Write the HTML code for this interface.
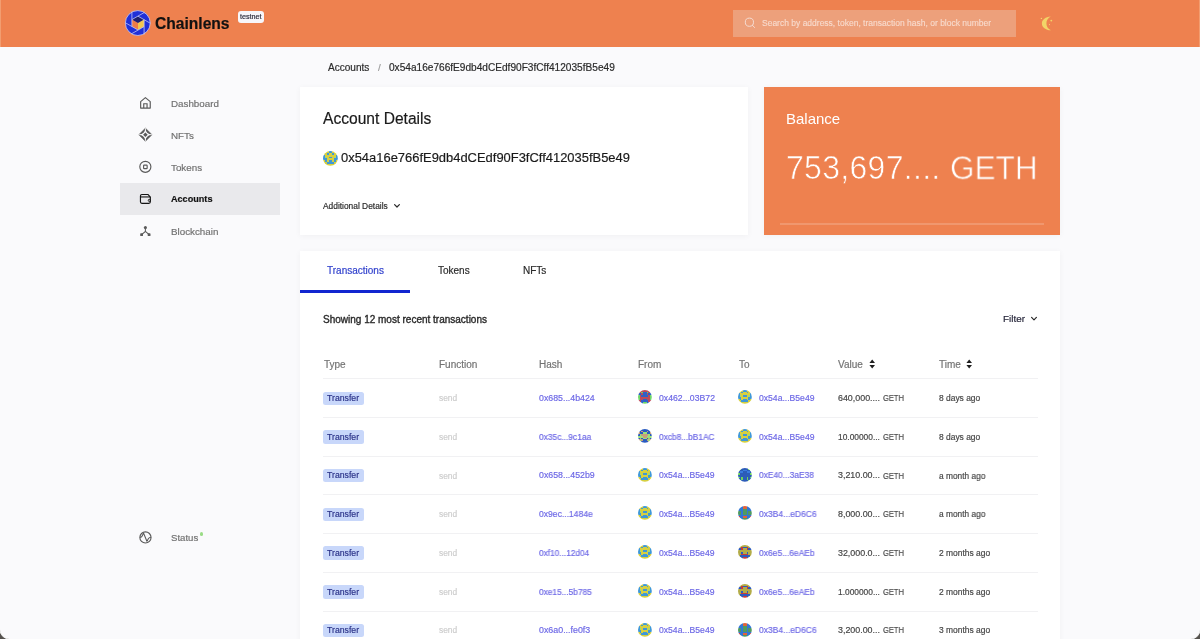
<!DOCTYPE html>
<html><head><meta charset="utf-8">
<style>
*{margin:0;padding:0;box-sizing:border-box}
html,body{width:1200px;height:639px;overflow:hidden;background:#FAFAFC;font-family:"Liberation Sans",sans-serif}
.t{position:absolute;white-space:nowrap;will-change:transform;-webkit-text-stroke:0.18px currentColor}
.abs{position:absolute}
.av{position:absolute}
svg{position:absolute;overflow:visible}
</style></head><body>
<div class="abs" style="left:0;top:0;width:1200px;height:47px;background:#EE814F"></div>
<svg style="left:124px;top:9px;width:28px;height:28px" viewBox="124 9 28 28">
<circle cx="137.8" cy="23.05" r="12.45" fill="#2030D8" stroke="#D8DCF8" stroke-width="0.7"/>
<polygon points="138,16.2 144.1,19.6 138,23 131.9,19.6" fill="#1D1F6E"/>
<polygon points="131.9,19.6 138,23 138,30 131.9,26.6" fill="#EE7C45"/>
<polygon points="138,23 144.1,19.6 144.1,26.6 138,30" fill="#F2C64E"/>
<g stroke="#C9CEF6" stroke-width="0.75" fill="none">
<line x1="131.9" y1="26.6" x2="131.9" y2="11.6"/>
<line x1="131.9" y1="19.6" x2="144.6" y2="12.3"/>
<line x1="138" y1="16.2" x2="150.2" y2="23.2"/>
<line x1="144.1" y1="19.6" x2="144.1" y2="34.5"/>
<line x1="144.1" y1="26.6" x2="131.4" y2="33.9"/>
<line x1="138" y1="30" x2="125.6" y2="22.9"/>
</g></svg>
<div class="t" style="left:154.75px;top:15.69px;font-size:15.6px;line-height:15.6px;color:#111;font-weight:700;">Chainlens</div>
<div class="abs" style="left:238px;top:10.6px;width:26px;height:12px;background:#F7F6FA;border-radius:3px"></div>
<div class="t" style="left:240.40px;top:12.80px;font-size:7.2px;line-height:7.2px;color:#2A2A3A;font-weight:400;">testnet</div>
<div class="abs" style="left:733px;top:10px;width:283px;height:26.5px;background:#EDA07B"></div>
<svg style="left:744px;top:17px;width:12px;height:12px" viewBox="0 0 12 12">
<circle cx="5.4" cy="5.2" r="4.1" fill="none" stroke="#F5DCD2" stroke-width="1"/>
<line x1="8.3" y1="8.2" x2="10.6" y2="10.5" stroke="#F5DCD2" stroke-width="1" stroke-linecap="round"/></svg>
<div class="t" style="left:761.80px;top:18.55px;font-size:8.5px;line-height:8.5px;color:#F7DBCE;font-weight:400;-webkit-text-stroke:0.1px #F7DBCE;">Search by address, token, transaction hash, or block number</div>
<svg style="left:1038px;top:14px;width:18px;height:18px" viewBox="1038 14 18 18">
<path d="M1050.8,16.5 C1045.6,16.8 1041.9,19.7 1041.9,23.4 C1041.9,27.2 1045.6,30.1 1050.9,30.2 C1047.9,28.7 1046.4,26.2 1046.4,23.4 C1046.4,20.6 1047.9,18.1 1050.8,16.5 Z" fill="#F2D468"/>
<circle cx="1041.4" cy="18.4" r="0.7" fill="#F2D468"/>
<circle cx="1051.3" cy="20.6" r="0.95" fill="#F2D468"/>
<circle cx="1049.5" cy="24.6" r="0.6" fill="#F2D468"/>
</svg>
<div class="abs" style="left:120px;top:183px;width:160px;height:32px;background:#E9E9EC"></div>
<svg style="left:136px;top:94px;width:20px;height:18px" viewBox="136 94 20 18"><path d="M140.65,108.05 V101.6 L145.4,97.65 L150.25,101.6 V108.05 Z" fill="none" stroke="#5A5A5A" stroke-width="1.15" stroke-linejoin="round"/>
<path d="M143.75,108.05 V103.75 H147.05 V108.05" fill="none" stroke="#5A5A5A" stroke-width="1.15"/></svg>
<svg style="left:136px;top:126px;width:20px;height:18px" viewBox="136 126 20 18"><path d="M145.4,128 L152.1,134.7 L145.4,141.4 L138.7,134.7 Z" fill="#5A5A5A" stroke="#5A5A5A" stroke-width="0.4" stroke-linejoin="round"/>
<path d="M145.4,128.3 Q145.95,134.15 151.8,134.7 Q145.95,135.25 145.4,141.1 Q144.85,135.25 139,134.7 Q144.85,134.15 145.4,128.3 Z" fill="#FAFAFC"/><path d="M145.4,127.8 V141.6 M138.5,134.7 H152.3" stroke="#FAFAFC" stroke-width="0.7"/>
<path d="M145.4,132.4 L147.7,134.7 L145.4,137 L143.1,134.7 Z" fill="#5A5A5A"/></svg>
<svg style="left:136px;top:158px;width:20px;height:18px" viewBox="136 158 20 18"><circle cx="145.35" cy="166.85" r="5.55" fill="none" stroke="#5A5A5A" stroke-width="1.15"/>
<rect x="143.6" y="165.1" width="3.55" height="3.5" rx="0.6" fill="none" stroke="#5A5A5A" stroke-width="1.15"/></svg>
<svg style="left:136px;top:190px;width:20px;height:18px" viewBox="136 190 20 18"><path d="M141.9,194.45 H147.9 L150.35,197.2 V201.8 Q150.35,203.3 148.9,203.3 H141.9 Q140.45,203.3 140.45,201.8 V195.9 Q140.45,194.45 141.9,194.45 Z" fill="none" stroke="#151515" stroke-width="1.15" stroke-linejoin="round"/>
<path d="M140.5,196.95 H150.3" stroke="#151515" stroke-width="1.1"/>
<circle cx="149.3" cy="200.4" r="1.05" fill="none" stroke="#151515" stroke-width="0.9"/></svg>
<svg style="left:136px;top:222px;width:20px;height:18px" viewBox="136 222 20 18"><path d="M145.4,227.6 V231.4 L141.6,234.7 M145.4,231.4 L149.1,234.7" fill="none" stroke="#5A5A5A" stroke-width="1.05"/>
<circle cx="145.4" cy="227.6" r="1.55" fill="#5A5A5A"/><rect x="140.2" y="233.3" width="2.8" height="2.8" rx="0.7" fill="#5A5A5A"/><rect x="147.7" y="233.3" width="2.8" height="2.8" rx="0.7" fill="#5A5A5A"/></svg>
<svg style="left:136px;top:528px;width:20px;height:20px" viewBox="136 528 20 20"><circle cx="145.45" cy="537.45" r="5.6" fill="none" stroke="#5A5A5A" stroke-width="1.1"/>
<path d="M139.9,537.3 C141.6,537.4 142.3,536.4 142.8,534.6 L143.5,533 L146.9,541.2 L148.5,538.5 C149.1,537.6 149.9,537.4 151.1,537.3" fill="none" stroke="#5A5A5A" stroke-width="1.05" stroke-linejoin="round"/></svg>
<div class="t" style="left:170.70px;top:98.90px;font-size:9.8px;line-height:9.8px;color:#717171;font-weight:400;">Dashboard</div>
<div class="t" style="left:170.70px;top:130.90px;font-size:9.8px;line-height:9.8px;color:#717171;font-weight:400;">NFTs</div>
<div class="t" style="left:170.70px;top:162.90px;font-size:9.8px;line-height:9.8px;color:#717171;font-weight:400;">Tokens</div>
<div class="t" style="left:170.90px;top:195.49px;font-size:9.1px;line-height:9.1px;color:#111;font-weight:700;">Accounts</div>
<div class="t" style="left:170.70px;top:226.90px;font-size:9.8px;line-height:9.8px;color:#717171;font-weight:400;">Blockchain</div>
<div class="t" style="left:170.90px;top:532.72px;font-size:9.6px;line-height:9.6px;color:#717171;font-weight:400;">Status</div>
<div class="abs" style="left:199.5px;top:532.4px;width:3.5px;height:3.5px;border-radius:50%;background:#9ADC86"></div>
<div class="t" style="left:328.20px;top:62.89px;font-size:10.05px;line-height:10.05px;color:#2A2A2A;font-weight:400;">Accounts</div>
<div class="t" style="left:377.60px;top:62.51px;font-size:9.9px;line-height:9.9px;color:#9A9A9A;font-weight:400;">/</div>
<div class="t" style="left:389.00px;top:62.83px;font-size:10.12px;line-height:10.12px;color:#2A2A2A;font-weight:400;">0x54a16e766fE9db4dCEdf90F3fCff412035fB5e49</div>
<div class="abs" style="left:300px;top:87px;width:448px;height:148px;background:#fff;box-shadow:0 1px 6px rgba(0,0,0,0.045)"></div>
<div class="t" style="left:323.00px;top:110.59px;font-size:15.6px;line-height:15.6px;color:#1A1A1A;font-weight:400;transform:scale(1.0,1.04);transform-origin:0 13.21px;">Account Details</div>
<svg class="av" style="left:322.80px;top:150.70px;width:14.8px;height:14.8px" viewBox="0 0 8 8"><defs><clipPath id="c330158"><circle cx="4" cy="4" r="4"/></clipPath></defs><g clip-path="url(#c330158)" shape-rendering="crispEdges"><rect x="0" y="0" width="1.02" height="1.02" fill="#D6D040"/><rect x="1" y="0" width="1.02" height="1.02" fill="#D6D040"/><rect x="2" y="0" width="1.02" height="1.02" fill="#D6D040"/><rect x="3" y="0" width="1.02" height="1.02" fill="#3F98D8"/><rect x="4" y="0" width="1.02" height="1.02" fill="#3F98D8"/><rect x="5" y="0" width="1.02" height="1.02" fill="#D6D040"/><rect x="6" y="0" width="1.02" height="1.02" fill="#D6D040"/><rect x="7" y="0" width="1.02" height="1.02" fill="#D6D040"/><rect x="0" y="1" width="1.02" height="1.02" fill="#D6D040"/><rect x="1" y="1" width="1.02" height="1.02" fill="#D6D040"/><rect x="2" y="1" width="1.02" height="1.02" fill="#3F98D8"/><rect x="3" y="1" width="1.02" height="1.02" fill="#D6D040"/><rect x="4" y="1" width="1.02" height="1.02" fill="#D6D040"/><rect x="5" y="1" width="1.02" height="1.02" fill="#3F98D8"/><rect x="6" y="1" width="1.02" height="1.02" fill="#D6D040"/><rect x="7" y="1" width="1.02" height="1.02" fill="#D6D040"/><rect x="0" y="2" width="1.02" height="1.02" fill="#3F98D8"/><rect x="1" y="2" width="1.02" height="1.02" fill="#D6D040"/><rect x="2" y="2" width="1.02" height="1.02" fill="#D6D040"/><rect x="3" y="2" width="1.02" height="1.02" fill="#D6D040"/><rect x="4" y="2" width="1.02" height="1.02" fill="#D6D040"/><rect x="5" y="2" width="1.02" height="1.02" fill="#D6D040"/><rect x="6" y="2" width="1.02" height="1.02" fill="#D6D040"/><rect x="7" y="2" width="1.02" height="1.02" fill="#3F98D8"/><rect x="0" y="3" width="1.02" height="1.02" fill="#3F98D8"/><rect x="1" y="3" width="1.02" height="1.02" fill="#A8D870"/><rect x="2" y="3" width="1.02" height="1.02" fill="#D6D040"/><rect x="3" y="3" width="1.02" height="1.02" fill="#3F98D8"/><rect x="4" y="3" width="1.02" height="1.02" fill="#3F98D8"/><rect x="5" y="3" width="1.02" height="1.02" fill="#D6D040"/><rect x="6" y="3" width="1.02" height="1.02" fill="#A8D870"/><rect x="7" y="3" width="1.02" height="1.02" fill="#3F98D8"/><rect x="0" y="4" width="1.02" height="1.02" fill="#3F98D8"/><rect x="1" y="4" width="1.02" height="1.02" fill="#3F98D8"/><rect x="2" y="4" width="1.02" height="1.02" fill="#D6D040"/><rect x="3" y="4" width="1.02" height="1.02" fill="#D6D040"/><rect x="4" y="4" width="1.02" height="1.02" fill="#D6D040"/><rect x="5" y="4" width="1.02" height="1.02" fill="#D6D040"/><rect x="6" y="4" width="1.02" height="1.02" fill="#3F98D8"/><rect x="7" y="4" width="1.02" height="1.02" fill="#3F98D8"/><rect x="0" y="5" width="1.02" height="1.02" fill="#D6D040"/><rect x="1" y="5" width="1.02" height="1.02" fill="#3F98D8"/><rect x="2" y="5" width="1.02" height="1.02" fill="#D6D040"/><rect x="3" y="5" width="1.02" height="1.02" fill="#3F98D8"/><rect x="4" y="5" width="1.02" height="1.02" fill="#3F98D8"/><rect x="5" y="5" width="1.02" height="1.02" fill="#D6D040"/><rect x="6" y="5" width="1.02" height="1.02" fill="#3F98D8"/><rect x="7" y="5" width="1.02" height="1.02" fill="#D6D040"/><rect x="0" y="6" width="1.02" height="1.02" fill="#D6D040"/><rect x="1" y="6" width="1.02" height="1.02" fill="#D6D040"/><rect x="2" y="6" width="1.02" height="1.02" fill="#3F98D8"/><rect x="3" y="6" width="1.02" height="1.02" fill="#3F98D8"/><rect x="4" y="6" width="1.02" height="1.02" fill="#3F98D8"/><rect x="5" y="6" width="1.02" height="1.02" fill="#3F98D8"/><rect x="6" y="6" width="1.02" height="1.02" fill="#D6D040"/><rect x="7" y="6" width="1.02" height="1.02" fill="#D6D040"/><rect x="0" y="7" width="1.02" height="1.02" fill="#D6D040"/><rect x="1" y="7" width="1.02" height="1.02" fill="#D6D040"/><rect x="2" y="7" width="1.02" height="1.02" fill="#D6D040"/><rect x="3" y="7" width="1.02" height="1.02" fill="#D6D040"/><rect x="4" y="7" width="1.02" height="1.02" fill="#D6D040"/><rect x="5" y="7" width="1.02" height="1.02" fill="#D6D040"/><rect x="6" y="7" width="1.02" height="1.02" fill="#D6D040"/><rect x="7" y="7" width="1.02" height="1.02" fill="#D6D040"/></g></svg>
<div class="t" style="left:340.90px;top:152.34px;font-size:12.94px;line-height:12.94px;color:#1A1A1A;font-weight:400;transform:scale(1.0,1.05);transform-origin:0 10.96px;">0x54a16e766fE9db4dCEdf90F3fCff412035fB5e49</div>
<div class="t" style="left:323.00px;top:201.70px;font-size:8.38px;line-height:8.38px;color:#2A2A2A;font-weight:400;">Additional Details</div>
<svg style="left:393px;top:202px;width:8px;height:8px" viewBox="0 0 8 8">
<path d="M1.6,2.6 L4,5 L6.4,2.6" fill="none" stroke="#2A2A2A" stroke-width="1.2" stroke-linecap="round" stroke-linejoin="round"/></svg>
<div class="abs" style="left:764px;top:87px;width:296px;height:148px;background:#EE814F;box-shadow:0 1px 6px rgba(0,0,0,0.045)"></div>
<div class="t" style="left:786.40px;top:111.00px;font-size:15px;line-height:15px;color:#FFFFFF;font-weight:400;-webkit-text-stroke:0;">Balance</div>
<div class="t" style="left:785.60px;top:152.10px;font-size:32px;line-height:32px;color:#FFFFFF;font-weight:400;transform:scale(1.0,1.06);transform-origin:0 27.10px;-webkit-text-stroke:0.6px #EE814F;letter-spacing:0.3px;">753,697....</div>
<div class="t" style="left:949.60px;top:152.10px;font-size:32px;line-height:32px;color:#FFFFFF;font-weight:400;transform:scale(0.985,1.06);transform-origin:0 27.10px;-webkit-text-stroke:0.6px #EE814F;">GETH</div>
<div class="abs" style="left:780px;top:223px;width:264px;height:1.7px;background:#F0976E"></div>
<div class="abs" style="left:300px;top:251px;width:760px;height:400px;background:#fff;box-shadow:0 1px 6px rgba(0,0,0,0.045)"></div>
<div class="t" style="left:327.00px;top:266.13px;font-size:10px;line-height:10px;color:#3040CC;font-weight:400;">Transactions</div>
<div class="t" style="left:437.80px;top:266.13px;font-size:10px;line-height:10px;color:#2A2A2A;font-weight:400;">Tokens</div>
<div class="t" style="left:523.20px;top:266.13px;font-size:10px;line-height:10px;color:#2A2A2A;font-weight:400;">NFTs</div>
<div class="abs" style="left:300px;top:289.5px;width:110px;height:3px;background:#1226D0"></div>
<div class="t" style="left:323.00px;top:314.83px;font-size:10px;line-height:10px;color:#2A2A2A;font-weight:400;-webkit-text-stroke:0.35px #2A2A2A;">Showing 12 most recent transactions</div>
<div class="t" style="left:1003.00px;top:314.41px;font-size:9.9px;line-height:9.9px;color:#26263A;font-weight:400;">Filter</div>
<svg style="left:1030px;top:315px;width:8px;height:8px" viewBox="0 0 8 8">
<path d="M1.6,2.4 L4,4.8 L6.4,2.4" fill="none" stroke="#2A2A2A" stroke-width="1.2" stroke-linecap="round" stroke-linejoin="round"/></svg>
<div class="t" style="left:323.80px;top:359.78px;font-size:10px;line-height:10px;color:#737373;font-weight:400;">Type</div>
<div class="t" style="left:438.75px;top:359.78px;font-size:10px;line-height:10px;color:#737373;font-weight:400;">Function</div>
<div class="t" style="left:538.75px;top:359.78px;font-size:10px;line-height:10px;color:#737373;font-weight:400;">Hash</div>
<div class="t" style="left:638.30px;top:359.78px;font-size:10px;line-height:10px;color:#737373;font-weight:400;">From</div>
<div class="t" style="left:738.75px;top:359.78px;font-size:10px;line-height:10px;color:#737373;font-weight:400;">To</div>
<div class="t" style="left:838.30px;top:359.78px;font-size:10px;line-height:10px;color:#737373;font-weight:400;">Value</div>
<div class="t" style="left:938.60px;top:359.78px;font-size:10px;line-height:10px;color:#737373;font-weight:400;">Time</div>
<svg style="left:868.8px;top:359px;width:7px;height:10px" viewBox="0 0 7 10">
<path d="M3.2,0.6 L6,4 H0.4 Z M3.2,9.4 L6,6 H0.4 Z" fill="#1E1E1E"/></svg>
<svg style="left:966.2px;top:359px;width:7px;height:10px" viewBox="0 0 7 10">
<path d="M3.2,0.6 L6,4 H0.4 Z M3.2,9.4 L6,6 H0.4 Z" fill="#1E1E1E"/></svg>
<div class="abs" style="left:322.5px;top:378.30px;width:715px;height:1px;background:#F1F1F3"></div>
<div class="abs" style="left:323.3px;top:391.50px;width:40.5px;height:13.4px;background:#C8D7FA;border-radius:2.5px"></div>
<div class="t" style="left:327.30px;top:394.03px;font-size:8.7px;line-height:8.7px;color:#2A3288;font-weight:400;-webkit-text-stroke:0.18px currentColor;">Transfer</div>
<div class="t" style="left:438.75px;top:394.09px;font-size:8.4px;line-height:8.4px;color:#CDCDCD;font-weight:400;-webkit-text-stroke:0.18px currentColor;">send</div>
<div class="t" style="left:538.75px;top:393.92px;font-size:8.6px;line-height:8.6px;color:#6D68E6;font-weight:400;transform:scale(1.0225,1.0);transform-origin:0 7.28px;-webkit-text-stroke:0.18px currentColor;">0x685...4b424</div>
<svg class="av" style="left:638.10px;top:390.20px;width:13.8px;height:13.8px" viewBox="0 0 8 8"><defs><clipPath id="c645397"><circle cx="4" cy="4" r="4"/></clipPath></defs><g clip-path="url(#c645397)" shape-rendering="crispEdges"><rect x="0" y="0" width="1.02" height="1.02" fill="#BF4A5A"/><rect x="1" y="0" width="1.02" height="1.02" fill="#BF4A5A"/><rect x="2" y="0" width="1.02" height="1.02" fill="#BF4A5A"/><rect x="3" y="0" width="1.02" height="1.02" fill="#BF4A5A"/><rect x="4" y="0" width="1.02" height="1.02" fill="#BF4A5A"/><rect x="5" y="0" width="1.02" height="1.02" fill="#BF4A5A"/><rect x="6" y="0" width="1.02" height="1.02" fill="#BF4A5A"/><rect x="7" y="0" width="1.02" height="1.02" fill="#BF4A5A"/><rect x="0" y="1" width="1.02" height="1.02" fill="#BF4A5A"/><rect x="1" y="1" width="1.02" height="1.02" fill="#BF4A5A"/><rect x="2" y="1" width="1.02" height="1.02" fill="#6FD86A"/><rect x="3" y="1" width="1.02" height="1.02" fill="#2F62C8"/><rect x="4" y="1" width="1.02" height="1.02" fill="#2F62C8"/><rect x="5" y="1" width="1.02" height="1.02" fill="#6FD86A"/><rect x="6" y="1" width="1.02" height="1.02" fill="#BF4A5A"/><rect x="7" y="1" width="1.02" height="1.02" fill="#BF4A5A"/><rect x="0" y="2" width="1.02" height="1.02" fill="#2F62C8"/><rect x="1" y="2" width="1.02" height="1.02" fill="#2F62C8"/><rect x="2" y="2" width="1.02" height="1.02" fill="#BF4A5A"/><rect x="3" y="2" width="1.02" height="1.02" fill="#2F62C8"/><rect x="4" y="2" width="1.02" height="1.02" fill="#2F62C8"/><rect x="5" y="2" width="1.02" height="1.02" fill="#BF4A5A"/><rect x="6" y="2" width="1.02" height="1.02" fill="#2F62C8"/><rect x="7" y="2" width="1.02" height="1.02" fill="#2F62C8"/><rect x="0" y="3" width="1.02" height="1.02" fill="#6FD86A"/><rect x="1" y="3" width="1.02" height="1.02" fill="#BF4A5A"/><rect x="2" y="3" width="1.02" height="1.02" fill="#2F62C8"/><rect x="3" y="3" width="1.02" height="1.02" fill="#2F62C8"/><rect x="4" y="3" width="1.02" height="1.02" fill="#2F62C8"/><rect x="5" y="3" width="1.02" height="1.02" fill="#2F62C8"/><rect x="6" y="3" width="1.02" height="1.02" fill="#BF4A5A"/><rect x="7" y="3" width="1.02" height="1.02" fill="#6FD86A"/><rect x="0" y="4" width="1.02" height="1.02" fill="#6FD86A"/><rect x="1" y="4" width="1.02" height="1.02" fill="#BF4A5A"/><rect x="2" y="4" width="1.02" height="1.02" fill="#BF4A5A"/><rect x="3" y="4" width="1.02" height="1.02" fill="#BF4A5A"/><rect x="4" y="4" width="1.02" height="1.02" fill="#BF4A5A"/><rect x="5" y="4" width="1.02" height="1.02" fill="#BF4A5A"/><rect x="6" y="4" width="1.02" height="1.02" fill="#BF4A5A"/><rect x="7" y="4" width="1.02" height="1.02" fill="#6FD86A"/><rect x="0" y="5" width="1.02" height="1.02" fill="#6FD86A"/><rect x="1" y="5" width="1.02" height="1.02" fill="#BF4A5A"/><rect x="2" y="5" width="1.02" height="1.02" fill="#BF4A5A"/><rect x="3" y="5" width="1.02" height="1.02" fill="#2F62C8"/><rect x="4" y="5" width="1.02" height="1.02" fill="#2F62C8"/><rect x="5" y="5" width="1.02" height="1.02" fill="#BF4A5A"/><rect x="6" y="5" width="1.02" height="1.02" fill="#BF4A5A"/><rect x="7" y="5" width="1.02" height="1.02" fill="#6FD86A"/><rect x="0" y="6" width="1.02" height="1.02" fill="#BF4A5A"/><rect x="1" y="6" width="1.02" height="1.02" fill="#BF4A5A"/><rect x="2" y="6" width="1.02" height="1.02" fill="#2F62C8"/><rect x="3" y="6" width="1.02" height="1.02" fill="#2F62C8"/><rect x="4" y="6" width="1.02" height="1.02" fill="#2F62C8"/><rect x="5" y="6" width="1.02" height="1.02" fill="#2F62C8"/><rect x="6" y="6" width="1.02" height="1.02" fill="#BF4A5A"/><rect x="7" y="6" width="1.02" height="1.02" fill="#BF4A5A"/><rect x="0" y="7" width="1.02" height="1.02" fill="#2F62C8"/><rect x="1" y="7" width="1.02" height="1.02" fill="#2F62C8"/><rect x="2" y="7" width="1.02" height="1.02" fill="#2F62C8"/><rect x="3" y="7" width="1.02" height="1.02" fill="#6FD86A"/><rect x="4" y="7" width="1.02" height="1.02" fill="#6FD86A"/><rect x="5" y="7" width="1.02" height="1.02" fill="#2F62C8"/><rect x="6" y="7" width="1.02" height="1.02" fill="#2F62C8"/><rect x="7" y="7" width="1.02" height="1.02" fill="#2F62C8"/></g></svg>
<div class="t" style="left:658.50px;top:393.92px;font-size:8.6px;line-height:8.6px;color:#6D68E6;font-weight:400;transform:scale(1.0096,1.0);transform-origin:0 7.28px;-webkit-text-stroke:0.18px currentColor;">0x462...03B72</div>
<svg class="av" style="left:738.10px;top:390.20px;width:13.8px;height:13.8px" viewBox="0 0 8 8"><defs><clipPath id="c745397"><circle cx="4" cy="4" r="4"/></clipPath></defs><g clip-path="url(#c745397)" shape-rendering="crispEdges"><rect x="0" y="0" width="1.02" height="1.02" fill="#D6D040"/><rect x="1" y="0" width="1.02" height="1.02" fill="#D6D040"/><rect x="2" y="0" width="1.02" height="1.02" fill="#D6D040"/><rect x="3" y="0" width="1.02" height="1.02" fill="#3F98D8"/><rect x="4" y="0" width="1.02" height="1.02" fill="#3F98D8"/><rect x="5" y="0" width="1.02" height="1.02" fill="#D6D040"/><rect x="6" y="0" width="1.02" height="1.02" fill="#D6D040"/><rect x="7" y="0" width="1.02" height="1.02" fill="#D6D040"/><rect x="0" y="1" width="1.02" height="1.02" fill="#D6D040"/><rect x="1" y="1" width="1.02" height="1.02" fill="#D6D040"/><rect x="2" y="1" width="1.02" height="1.02" fill="#3F98D8"/><rect x="3" y="1" width="1.02" height="1.02" fill="#D6D040"/><rect x="4" y="1" width="1.02" height="1.02" fill="#D6D040"/><rect x="5" y="1" width="1.02" height="1.02" fill="#3F98D8"/><rect x="6" y="1" width="1.02" height="1.02" fill="#D6D040"/><rect x="7" y="1" width="1.02" height="1.02" fill="#D6D040"/><rect x="0" y="2" width="1.02" height="1.02" fill="#3F98D8"/><rect x="1" y="2" width="1.02" height="1.02" fill="#D6D040"/><rect x="2" y="2" width="1.02" height="1.02" fill="#D6D040"/><rect x="3" y="2" width="1.02" height="1.02" fill="#D6D040"/><rect x="4" y="2" width="1.02" height="1.02" fill="#D6D040"/><rect x="5" y="2" width="1.02" height="1.02" fill="#D6D040"/><rect x="6" y="2" width="1.02" height="1.02" fill="#D6D040"/><rect x="7" y="2" width="1.02" height="1.02" fill="#3F98D8"/><rect x="0" y="3" width="1.02" height="1.02" fill="#3F98D8"/><rect x="1" y="3" width="1.02" height="1.02" fill="#A8D870"/><rect x="2" y="3" width="1.02" height="1.02" fill="#D6D040"/><rect x="3" y="3" width="1.02" height="1.02" fill="#3F98D8"/><rect x="4" y="3" width="1.02" height="1.02" fill="#3F98D8"/><rect x="5" y="3" width="1.02" height="1.02" fill="#D6D040"/><rect x="6" y="3" width="1.02" height="1.02" fill="#A8D870"/><rect x="7" y="3" width="1.02" height="1.02" fill="#3F98D8"/><rect x="0" y="4" width="1.02" height="1.02" fill="#3F98D8"/><rect x="1" y="4" width="1.02" height="1.02" fill="#3F98D8"/><rect x="2" y="4" width="1.02" height="1.02" fill="#D6D040"/><rect x="3" y="4" width="1.02" height="1.02" fill="#D6D040"/><rect x="4" y="4" width="1.02" height="1.02" fill="#D6D040"/><rect x="5" y="4" width="1.02" height="1.02" fill="#D6D040"/><rect x="6" y="4" width="1.02" height="1.02" fill="#3F98D8"/><rect x="7" y="4" width="1.02" height="1.02" fill="#3F98D8"/><rect x="0" y="5" width="1.02" height="1.02" fill="#D6D040"/><rect x="1" y="5" width="1.02" height="1.02" fill="#3F98D8"/><rect x="2" y="5" width="1.02" height="1.02" fill="#D6D040"/><rect x="3" y="5" width="1.02" height="1.02" fill="#3F98D8"/><rect x="4" y="5" width="1.02" height="1.02" fill="#3F98D8"/><rect x="5" y="5" width="1.02" height="1.02" fill="#D6D040"/><rect x="6" y="5" width="1.02" height="1.02" fill="#3F98D8"/><rect x="7" y="5" width="1.02" height="1.02" fill="#D6D040"/><rect x="0" y="6" width="1.02" height="1.02" fill="#D6D040"/><rect x="1" y="6" width="1.02" height="1.02" fill="#D6D040"/><rect x="2" y="6" width="1.02" height="1.02" fill="#3F98D8"/><rect x="3" y="6" width="1.02" height="1.02" fill="#3F98D8"/><rect x="4" y="6" width="1.02" height="1.02" fill="#3F98D8"/><rect x="5" y="6" width="1.02" height="1.02" fill="#3F98D8"/><rect x="6" y="6" width="1.02" height="1.02" fill="#D6D040"/><rect x="7" y="6" width="1.02" height="1.02" fill="#D6D040"/><rect x="0" y="7" width="1.02" height="1.02" fill="#D6D040"/><rect x="1" y="7" width="1.02" height="1.02" fill="#D6D040"/><rect x="2" y="7" width="1.02" height="1.02" fill="#D6D040"/><rect x="3" y="7" width="1.02" height="1.02" fill="#D6D040"/><rect x="4" y="7" width="1.02" height="1.02" fill="#D6D040"/><rect x="5" y="7" width="1.02" height="1.02" fill="#D6D040"/><rect x="6" y="7" width="1.02" height="1.02" fill="#D6D040"/><rect x="7" y="7" width="1.02" height="1.02" fill="#D6D040"/></g></svg>
<div class="t" style="left:758.50px;top:393.92px;font-size:8.6px;line-height:8.6px;color:#6D68E6;font-weight:400;transform:scale(1.0005,1.0);transform-origin:0 7.28px;-webkit-text-stroke:0.18px currentColor;">0x54a...B5e49</div>
<div class="t" style="left:838.00px;top:393.67px;font-size:8.89px;line-height:8.89px;color:#454545;font-weight:400;-webkit-text-stroke:0.18px currentColor;">640,000....</div>
<div class="t" style="left:883.40px;top:394.09px;font-size:8.4px;line-height:8.4px;color:#454545;font-weight:400;transform:scale(0.9,1.0);transform-origin:0 7.11px;-webkit-text-stroke:0.18px currentColor;">GETH</div>
<div class="t" style="left:938.50px;top:394.09px;font-size:8.4px;line-height:8.4px;color:#454545;font-weight:400;transform:scale(1.0049,1.0);transform-origin:0 7.11px;-webkit-text-stroke:0.18px currentColor;">8 days ago</div>
<div class="abs" style="left:322.5px;top:417.03px;width:715px;height:1px;background:#F1F1F3"></div>
<div class="abs" style="left:323.3px;top:430.23px;width:40.5px;height:13.4px;background:#C8D7FA;border-radius:2.5px"></div>
<div class="t" style="left:327.30px;top:432.76px;font-size:8.7px;line-height:8.7px;color:#2A3288;font-weight:400;-webkit-text-stroke:0.18px currentColor;">Transfer</div>
<div class="t" style="left:438.75px;top:432.82px;font-size:8.4px;line-height:8.4px;color:#CDCDCD;font-weight:400;-webkit-text-stroke:0.18px currentColor;">send</div>
<div class="t" style="left:538.75px;top:432.65px;font-size:8.6px;line-height:8.6px;color:#6D68E6;font-weight:400;transform:scale(0.9756,1.0);transform-origin:0 7.28px;-webkit-text-stroke:0.18px currentColor;">0x35c...9c1aa</div>
<svg class="av" style="left:638.10px;top:428.93px;width:13.8px;height:13.8px" viewBox="0 0 8 8"><defs><clipPath id="c645435"><circle cx="4" cy="4" r="4"/></clipPath></defs><g clip-path="url(#c645435)" shape-rendering="crispEdges"><rect x="0" y="0" width="1.02" height="1.02" fill="#2A5CC0"/><rect x="1" y="0" width="1.02" height="1.02" fill="#2A5CC0"/><rect x="2" y="0" width="1.02" height="1.02" fill="#2A5CC0"/><rect x="3" y="0" width="1.02" height="1.02" fill="#2A5CC0"/><rect x="4" y="0" width="1.02" height="1.02" fill="#2A5CC0"/><rect x="5" y="0" width="1.02" height="1.02" fill="#2A5CC0"/><rect x="6" y="0" width="1.02" height="1.02" fill="#2A5CC0"/><rect x="7" y="0" width="1.02" height="1.02" fill="#2A5CC0"/><rect x="0" y="1" width="1.02" height="1.02" fill="#2A5CC0"/><rect x="1" y="1" width="1.02" height="1.02" fill="#2A5CC0"/><rect x="2" y="1" width="1.02" height="1.02" fill="#C9A07A"/><rect x="3" y="1" width="1.02" height="1.02" fill="#2A5CC0"/><rect x="4" y="1" width="1.02" height="1.02" fill="#2A5CC0"/><rect x="5" y="1" width="1.02" height="1.02" fill="#C9A07A"/><rect x="6" y="1" width="1.02" height="1.02" fill="#2A5CC0"/><rect x="7" y="1" width="1.02" height="1.02" fill="#2A5CC0"/><rect x="0" y="2" width="1.02" height="1.02" fill="#C9A07A"/><rect x="1" y="2" width="1.02" height="1.02" fill="#2A5CC0"/><rect x="2" y="2" width="1.02" height="1.02" fill="#2A5CC0"/><rect x="3" y="2" width="1.02" height="1.02" fill="#9BE37A"/><rect x="4" y="2" width="1.02" height="1.02" fill="#9BE37A"/><rect x="5" y="2" width="1.02" height="1.02" fill="#2A5CC0"/><rect x="6" y="2" width="1.02" height="1.02" fill="#2A5CC0"/><rect x="7" y="2" width="1.02" height="1.02" fill="#C9A07A"/><rect x="0" y="3" width="1.02" height="1.02" fill="#2A5CC0"/><rect x="1" y="3" width="1.02" height="1.02" fill="#9BE37A"/><rect x="2" y="3" width="1.02" height="1.02" fill="#C9A07A"/><rect x="3" y="3" width="1.02" height="1.02" fill="#C9A07A"/><rect x="4" y="3" width="1.02" height="1.02" fill="#C9A07A"/><rect x="5" y="3" width="1.02" height="1.02" fill="#C9A07A"/><rect x="6" y="3" width="1.02" height="1.02" fill="#9BE37A"/><rect x="7" y="3" width="1.02" height="1.02" fill="#2A5CC0"/><rect x="0" y="4" width="1.02" height="1.02" fill="#9BE37A"/><rect x="1" y="4" width="1.02" height="1.02" fill="#9BE37A"/><rect x="2" y="4" width="1.02" height="1.02" fill="#9BE37A"/><rect x="3" y="4" width="1.02" height="1.02" fill="#C9A07A"/><rect x="4" y="4" width="1.02" height="1.02" fill="#C9A07A"/><rect x="5" y="4" width="1.02" height="1.02" fill="#9BE37A"/><rect x="6" y="4" width="1.02" height="1.02" fill="#9BE37A"/><rect x="7" y="4" width="1.02" height="1.02" fill="#9BE37A"/><rect x="0" y="5" width="1.02" height="1.02" fill="#2A5CC0"/><rect x="1" y="5" width="1.02" height="1.02" fill="#C9A07A"/><rect x="2" y="5" width="1.02" height="1.02" fill="#2A5CC0"/><rect x="3" y="5" width="1.02" height="1.02" fill="#9BE37A"/><rect x="4" y="5" width="1.02" height="1.02" fill="#9BE37A"/><rect x="5" y="5" width="1.02" height="1.02" fill="#2A5CC0"/><rect x="6" y="5" width="1.02" height="1.02" fill="#C9A07A"/><rect x="7" y="5" width="1.02" height="1.02" fill="#2A5CC0"/><rect x="0" y="6" width="1.02" height="1.02" fill="#C9A07A"/><rect x="1" y="6" width="1.02" height="1.02" fill="#9BE37A"/><rect x="2" y="6" width="1.02" height="1.02" fill="#C9A07A"/><rect x="3" y="6" width="1.02" height="1.02" fill="#2A5CC0"/><rect x="4" y="6" width="1.02" height="1.02" fill="#2A5CC0"/><rect x="5" y="6" width="1.02" height="1.02" fill="#C9A07A"/><rect x="6" y="6" width="1.02" height="1.02" fill="#9BE37A"/><rect x="7" y="6" width="1.02" height="1.02" fill="#C9A07A"/><rect x="0" y="7" width="1.02" height="1.02" fill="#C9A07A"/><rect x="1" y="7" width="1.02" height="1.02" fill="#C9A07A"/><rect x="2" y="7" width="1.02" height="1.02" fill="#2A5CC0"/><rect x="3" y="7" width="1.02" height="1.02" fill="#2A5CC0"/><rect x="4" y="7" width="1.02" height="1.02" fill="#2A5CC0"/><rect x="5" y="7" width="1.02" height="1.02" fill="#2A5CC0"/><rect x="6" y="7" width="1.02" height="1.02" fill="#C9A07A"/><rect x="7" y="7" width="1.02" height="1.02" fill="#C9A07A"/></g></svg>
<div class="t" style="left:658.50px;top:432.65px;font-size:8.6px;line-height:8.6px;color:#6D68E6;font-weight:400;transform:scale(0.9693,1.0);transform-origin:0 7.28px;-webkit-text-stroke:0.18px currentColor;">0xcb8...bB1AC</div>
<svg class="av" style="left:738.10px;top:428.93px;width:13.8px;height:13.8px" viewBox="0 0 8 8"><defs><clipPath id="c745435"><circle cx="4" cy="4" r="4"/></clipPath></defs><g clip-path="url(#c745435)" shape-rendering="crispEdges"><rect x="0" y="0" width="1.02" height="1.02" fill="#D6D040"/><rect x="1" y="0" width="1.02" height="1.02" fill="#D6D040"/><rect x="2" y="0" width="1.02" height="1.02" fill="#D6D040"/><rect x="3" y="0" width="1.02" height="1.02" fill="#3F98D8"/><rect x="4" y="0" width="1.02" height="1.02" fill="#3F98D8"/><rect x="5" y="0" width="1.02" height="1.02" fill="#D6D040"/><rect x="6" y="0" width="1.02" height="1.02" fill="#D6D040"/><rect x="7" y="0" width="1.02" height="1.02" fill="#D6D040"/><rect x="0" y="1" width="1.02" height="1.02" fill="#D6D040"/><rect x="1" y="1" width="1.02" height="1.02" fill="#D6D040"/><rect x="2" y="1" width="1.02" height="1.02" fill="#3F98D8"/><rect x="3" y="1" width="1.02" height="1.02" fill="#D6D040"/><rect x="4" y="1" width="1.02" height="1.02" fill="#D6D040"/><rect x="5" y="1" width="1.02" height="1.02" fill="#3F98D8"/><rect x="6" y="1" width="1.02" height="1.02" fill="#D6D040"/><rect x="7" y="1" width="1.02" height="1.02" fill="#D6D040"/><rect x="0" y="2" width="1.02" height="1.02" fill="#3F98D8"/><rect x="1" y="2" width="1.02" height="1.02" fill="#D6D040"/><rect x="2" y="2" width="1.02" height="1.02" fill="#D6D040"/><rect x="3" y="2" width="1.02" height="1.02" fill="#D6D040"/><rect x="4" y="2" width="1.02" height="1.02" fill="#D6D040"/><rect x="5" y="2" width="1.02" height="1.02" fill="#D6D040"/><rect x="6" y="2" width="1.02" height="1.02" fill="#D6D040"/><rect x="7" y="2" width="1.02" height="1.02" fill="#3F98D8"/><rect x="0" y="3" width="1.02" height="1.02" fill="#3F98D8"/><rect x="1" y="3" width="1.02" height="1.02" fill="#A8D870"/><rect x="2" y="3" width="1.02" height="1.02" fill="#D6D040"/><rect x="3" y="3" width="1.02" height="1.02" fill="#3F98D8"/><rect x="4" y="3" width="1.02" height="1.02" fill="#3F98D8"/><rect x="5" y="3" width="1.02" height="1.02" fill="#D6D040"/><rect x="6" y="3" width="1.02" height="1.02" fill="#A8D870"/><rect x="7" y="3" width="1.02" height="1.02" fill="#3F98D8"/><rect x="0" y="4" width="1.02" height="1.02" fill="#3F98D8"/><rect x="1" y="4" width="1.02" height="1.02" fill="#3F98D8"/><rect x="2" y="4" width="1.02" height="1.02" fill="#D6D040"/><rect x="3" y="4" width="1.02" height="1.02" fill="#D6D040"/><rect x="4" y="4" width="1.02" height="1.02" fill="#D6D040"/><rect x="5" y="4" width="1.02" height="1.02" fill="#D6D040"/><rect x="6" y="4" width="1.02" height="1.02" fill="#3F98D8"/><rect x="7" y="4" width="1.02" height="1.02" fill="#3F98D8"/><rect x="0" y="5" width="1.02" height="1.02" fill="#D6D040"/><rect x="1" y="5" width="1.02" height="1.02" fill="#3F98D8"/><rect x="2" y="5" width="1.02" height="1.02" fill="#D6D040"/><rect x="3" y="5" width="1.02" height="1.02" fill="#3F98D8"/><rect x="4" y="5" width="1.02" height="1.02" fill="#3F98D8"/><rect x="5" y="5" width="1.02" height="1.02" fill="#D6D040"/><rect x="6" y="5" width="1.02" height="1.02" fill="#3F98D8"/><rect x="7" y="5" width="1.02" height="1.02" fill="#D6D040"/><rect x="0" y="6" width="1.02" height="1.02" fill="#D6D040"/><rect x="1" y="6" width="1.02" height="1.02" fill="#D6D040"/><rect x="2" y="6" width="1.02" height="1.02" fill="#3F98D8"/><rect x="3" y="6" width="1.02" height="1.02" fill="#3F98D8"/><rect x="4" y="6" width="1.02" height="1.02" fill="#3F98D8"/><rect x="5" y="6" width="1.02" height="1.02" fill="#3F98D8"/><rect x="6" y="6" width="1.02" height="1.02" fill="#D6D040"/><rect x="7" y="6" width="1.02" height="1.02" fill="#D6D040"/><rect x="0" y="7" width="1.02" height="1.02" fill="#D6D040"/><rect x="1" y="7" width="1.02" height="1.02" fill="#D6D040"/><rect x="2" y="7" width="1.02" height="1.02" fill="#D6D040"/><rect x="3" y="7" width="1.02" height="1.02" fill="#D6D040"/><rect x="4" y="7" width="1.02" height="1.02" fill="#D6D040"/><rect x="5" y="7" width="1.02" height="1.02" fill="#D6D040"/><rect x="6" y="7" width="1.02" height="1.02" fill="#D6D040"/><rect x="7" y="7" width="1.02" height="1.02" fill="#D6D040"/></g></svg>
<div class="t" style="left:758.50px;top:432.65px;font-size:8.6px;line-height:8.6px;color:#6D68E6;font-weight:400;transform:scale(1.0005,1.0);transform-origin:0 7.28px;-webkit-text-stroke:0.18px currentColor;">0x54a...B5e49</div>
<div class="t" style="left:838.00px;top:432.82px;font-size:8.39px;line-height:8.39px;color:#454545;font-weight:400;-webkit-text-stroke:0.18px currentColor;">10.00000...</div>
<div class="t" style="left:883.40px;top:432.82px;font-size:8.4px;line-height:8.4px;color:#454545;font-weight:400;transform:scale(0.9,1.0);transform-origin:0 7.11px;-webkit-text-stroke:0.18px currentColor;">GETH</div>
<div class="t" style="left:938.50px;top:432.82px;font-size:8.4px;line-height:8.4px;color:#454545;font-weight:400;transform:scale(1.0049,1.0);transform-origin:0 7.11px;-webkit-text-stroke:0.18px currentColor;">8 days ago</div>
<div class="abs" style="left:322.5px;top:455.76px;width:715px;height:1px;background:#F1F1F3"></div>
<div class="abs" style="left:323.3px;top:468.96px;width:40.5px;height:13.4px;background:#C8D7FA;border-radius:2.5px"></div>
<div class="t" style="left:327.30px;top:471.49px;font-size:8.7px;line-height:8.7px;color:#2A3288;font-weight:400;-webkit-text-stroke:0.18px currentColor;">Transfer</div>
<div class="t" style="left:438.75px;top:471.55px;font-size:8.4px;line-height:8.4px;color:#CDCDCD;font-weight:400;-webkit-text-stroke:0.18px currentColor;">send</div>
<div class="t" style="left:538.75px;top:471.38px;font-size:8.6px;line-height:8.6px;color:#6D68E6;font-weight:400;transform:scale(1.0225,1.0);transform-origin:0 7.28px;-webkit-text-stroke:0.18px currentColor;">0x658...452b9</div>
<svg class="av" style="left:638.10px;top:467.66px;width:13.8px;height:13.8px" viewBox="0 0 8 8"><defs><clipPath id="c645474"><circle cx="4" cy="4" r="4"/></clipPath></defs><g clip-path="url(#c645474)" shape-rendering="crispEdges"><rect x="0" y="0" width="1.02" height="1.02" fill="#D6D040"/><rect x="1" y="0" width="1.02" height="1.02" fill="#D6D040"/><rect x="2" y="0" width="1.02" height="1.02" fill="#D6D040"/><rect x="3" y="0" width="1.02" height="1.02" fill="#3F98D8"/><rect x="4" y="0" width="1.02" height="1.02" fill="#3F98D8"/><rect x="5" y="0" width="1.02" height="1.02" fill="#D6D040"/><rect x="6" y="0" width="1.02" height="1.02" fill="#D6D040"/><rect x="7" y="0" width="1.02" height="1.02" fill="#D6D040"/><rect x="0" y="1" width="1.02" height="1.02" fill="#D6D040"/><rect x="1" y="1" width="1.02" height="1.02" fill="#D6D040"/><rect x="2" y="1" width="1.02" height="1.02" fill="#3F98D8"/><rect x="3" y="1" width="1.02" height="1.02" fill="#D6D040"/><rect x="4" y="1" width="1.02" height="1.02" fill="#D6D040"/><rect x="5" y="1" width="1.02" height="1.02" fill="#3F98D8"/><rect x="6" y="1" width="1.02" height="1.02" fill="#D6D040"/><rect x="7" y="1" width="1.02" height="1.02" fill="#D6D040"/><rect x="0" y="2" width="1.02" height="1.02" fill="#3F98D8"/><rect x="1" y="2" width="1.02" height="1.02" fill="#D6D040"/><rect x="2" y="2" width="1.02" height="1.02" fill="#D6D040"/><rect x="3" y="2" width="1.02" height="1.02" fill="#D6D040"/><rect x="4" y="2" width="1.02" height="1.02" fill="#D6D040"/><rect x="5" y="2" width="1.02" height="1.02" fill="#D6D040"/><rect x="6" y="2" width="1.02" height="1.02" fill="#D6D040"/><rect x="7" y="2" width="1.02" height="1.02" fill="#3F98D8"/><rect x="0" y="3" width="1.02" height="1.02" fill="#3F98D8"/><rect x="1" y="3" width="1.02" height="1.02" fill="#A8D870"/><rect x="2" y="3" width="1.02" height="1.02" fill="#D6D040"/><rect x="3" y="3" width="1.02" height="1.02" fill="#3F98D8"/><rect x="4" y="3" width="1.02" height="1.02" fill="#3F98D8"/><rect x="5" y="3" width="1.02" height="1.02" fill="#D6D040"/><rect x="6" y="3" width="1.02" height="1.02" fill="#A8D870"/><rect x="7" y="3" width="1.02" height="1.02" fill="#3F98D8"/><rect x="0" y="4" width="1.02" height="1.02" fill="#3F98D8"/><rect x="1" y="4" width="1.02" height="1.02" fill="#3F98D8"/><rect x="2" y="4" width="1.02" height="1.02" fill="#D6D040"/><rect x="3" y="4" width="1.02" height="1.02" fill="#D6D040"/><rect x="4" y="4" width="1.02" height="1.02" fill="#D6D040"/><rect x="5" y="4" width="1.02" height="1.02" fill="#D6D040"/><rect x="6" y="4" width="1.02" height="1.02" fill="#3F98D8"/><rect x="7" y="4" width="1.02" height="1.02" fill="#3F98D8"/><rect x="0" y="5" width="1.02" height="1.02" fill="#D6D040"/><rect x="1" y="5" width="1.02" height="1.02" fill="#3F98D8"/><rect x="2" y="5" width="1.02" height="1.02" fill="#D6D040"/><rect x="3" y="5" width="1.02" height="1.02" fill="#3F98D8"/><rect x="4" y="5" width="1.02" height="1.02" fill="#3F98D8"/><rect x="5" y="5" width="1.02" height="1.02" fill="#D6D040"/><rect x="6" y="5" width="1.02" height="1.02" fill="#3F98D8"/><rect x="7" y="5" width="1.02" height="1.02" fill="#D6D040"/><rect x="0" y="6" width="1.02" height="1.02" fill="#D6D040"/><rect x="1" y="6" width="1.02" height="1.02" fill="#D6D040"/><rect x="2" y="6" width="1.02" height="1.02" fill="#3F98D8"/><rect x="3" y="6" width="1.02" height="1.02" fill="#3F98D8"/><rect x="4" y="6" width="1.02" height="1.02" fill="#3F98D8"/><rect x="5" y="6" width="1.02" height="1.02" fill="#3F98D8"/><rect x="6" y="6" width="1.02" height="1.02" fill="#D6D040"/><rect x="7" y="6" width="1.02" height="1.02" fill="#D6D040"/><rect x="0" y="7" width="1.02" height="1.02" fill="#D6D040"/><rect x="1" y="7" width="1.02" height="1.02" fill="#D6D040"/><rect x="2" y="7" width="1.02" height="1.02" fill="#D6D040"/><rect x="3" y="7" width="1.02" height="1.02" fill="#D6D040"/><rect x="4" y="7" width="1.02" height="1.02" fill="#D6D040"/><rect x="5" y="7" width="1.02" height="1.02" fill="#D6D040"/><rect x="6" y="7" width="1.02" height="1.02" fill="#D6D040"/><rect x="7" y="7" width="1.02" height="1.02" fill="#D6D040"/></g></svg>
<div class="t" style="left:658.50px;top:471.38px;font-size:8.6px;line-height:8.6px;color:#6D68E6;font-weight:400;transform:scale(1.0005,1.0);transform-origin:0 7.28px;-webkit-text-stroke:0.18px currentColor;">0x54a...B5e49</div>
<svg class="av" style="left:738.10px;top:467.66px;width:13.8px;height:13.8px" viewBox="0 0 8 8"><defs><clipPath id="c745474"><circle cx="4" cy="4" r="4"/></clipPath></defs><g clip-path="url(#c745474)" shape-rendering="crispEdges"><rect x="0" y="0" width="1.02" height="1.02" fill="#6FD65A"/><rect x="1" y="0" width="1.02" height="1.02" fill="#6FD65A"/><rect x="2" y="0" width="1.02" height="1.02" fill="#2C5CB8"/><rect x="3" y="0" width="1.02" height="1.02" fill="#2C5CB8"/><rect x="4" y="0" width="1.02" height="1.02" fill="#2C5CB8"/><rect x="5" y="0" width="1.02" height="1.02" fill="#2C5CB8"/><rect x="6" y="0" width="1.02" height="1.02" fill="#6FD65A"/><rect x="7" y="0" width="1.02" height="1.02" fill="#6FD65A"/><rect x="0" y="1" width="1.02" height="1.02" fill="#6FD65A"/><rect x="1" y="1" width="1.02" height="1.02" fill="#2C5CB8"/><rect x="2" y="1" width="1.02" height="1.02" fill="#2C5CB8"/><rect x="3" y="1" width="1.02" height="1.02" fill="#3A7BDF"/><rect x="4" y="1" width="1.02" height="1.02" fill="#3A7BDF"/><rect x="5" y="1" width="1.02" height="1.02" fill="#2C5CB8"/><rect x="6" y="1" width="1.02" height="1.02" fill="#2C5CB8"/><rect x="7" y="1" width="1.02" height="1.02" fill="#6FD65A"/><rect x="0" y="2" width="1.02" height="1.02" fill="#2C5CB8"/><rect x="1" y="2" width="1.02" height="1.02" fill="#3A7BDF"/><rect x="2" y="2" width="1.02" height="1.02" fill="#3A7BDF"/><rect x="3" y="2" width="1.02" height="1.02" fill="#2C5CB8"/><rect x="4" y="2" width="1.02" height="1.02" fill="#2C5CB8"/><rect x="5" y="2" width="1.02" height="1.02" fill="#3A7BDF"/><rect x="6" y="2" width="1.02" height="1.02" fill="#3A7BDF"/><rect x="7" y="2" width="1.02" height="1.02" fill="#2C5CB8"/><rect x="0" y="3" width="1.02" height="1.02" fill="#6FD65A"/><rect x="1" y="3" width="1.02" height="1.02" fill="#2C5CB8"/><rect x="2" y="3" width="1.02" height="1.02" fill="#2C5CB8"/><rect x="3" y="3" width="1.02" height="1.02" fill="#2C5CB8"/><rect x="4" y="3" width="1.02" height="1.02" fill="#2C5CB8"/><rect x="5" y="3" width="1.02" height="1.02" fill="#2C5CB8"/><rect x="6" y="3" width="1.02" height="1.02" fill="#2C5CB8"/><rect x="7" y="3" width="1.02" height="1.02" fill="#6FD65A"/><rect x="0" y="4" width="1.02" height="1.02" fill="#2C5CB8"/><rect x="1" y="4" width="1.02" height="1.02" fill="#2C5CB8"/><rect x="2" y="4" width="1.02" height="1.02" fill="#2C5CB8"/><rect x="3" y="4" width="1.02" height="1.02" fill="#2C5CB8"/><rect x="4" y="4" width="1.02" height="1.02" fill="#2C5CB8"/><rect x="5" y="4" width="1.02" height="1.02" fill="#2C5CB8"/><rect x="6" y="4" width="1.02" height="1.02" fill="#2C5CB8"/><rect x="7" y="4" width="1.02" height="1.02" fill="#2C5CB8"/><rect x="0" y="5" width="1.02" height="1.02" fill="#6FD65A"/><rect x="1" y="5" width="1.02" height="1.02" fill="#2C5CB8"/><rect x="2" y="5" width="1.02" height="1.02" fill="#6FD65A"/><rect x="3" y="5" width="1.02" height="1.02" fill="#2C5CB8"/><rect x="4" y="5" width="1.02" height="1.02" fill="#2C5CB8"/><rect x="5" y="5" width="1.02" height="1.02" fill="#6FD65A"/><rect x="6" y="5" width="1.02" height="1.02" fill="#2C5CB8"/><rect x="7" y="5" width="1.02" height="1.02" fill="#6FD65A"/><rect x="0" y="6" width="1.02" height="1.02" fill="#2C5CB8"/><rect x="1" y="6" width="1.02" height="1.02" fill="#2C5CB8"/><rect x="2" y="6" width="1.02" height="1.02" fill="#6FD65A"/><rect x="3" y="6" width="1.02" height="1.02" fill="#2C5CB8"/><rect x="4" y="6" width="1.02" height="1.02" fill="#2C5CB8"/><rect x="5" y="6" width="1.02" height="1.02" fill="#6FD65A"/><rect x="6" y="6" width="1.02" height="1.02" fill="#2C5CB8"/><rect x="7" y="6" width="1.02" height="1.02" fill="#2C5CB8"/><rect x="0" y="7" width="1.02" height="1.02" fill="#6FD65A"/><rect x="1" y="7" width="1.02" height="1.02" fill="#6FD65A"/><rect x="2" y="7" width="1.02" height="1.02" fill="#2C5CB8"/><rect x="3" y="7" width="1.02" height="1.02" fill="#2C5CB8"/><rect x="4" y="7" width="1.02" height="1.02" fill="#2C5CB8"/><rect x="5" y="7" width="1.02" height="1.02" fill="#2C5CB8"/><rect x="6" y="7" width="1.02" height="1.02" fill="#6FD65A"/><rect x="7" y="7" width="1.02" height="1.02" fill="#6FD65A"/></g></svg>
<div class="t" style="left:758.50px;top:471.38px;font-size:8.6px;line-height:8.6px;color:#6D68E6;font-weight:400;transform:scale(0.9749,1.0);transform-origin:0 7.28px;-webkit-text-stroke:0.18px currentColor;">0xE40...3aE38</div>
<div class="t" style="left:838.00px;top:471.13px;font-size:8.89px;line-height:8.89px;color:#454545;font-weight:400;-webkit-text-stroke:0.18px currentColor;">3,210.00...</div>
<div class="t" style="left:883.40px;top:471.55px;font-size:8.4px;line-height:8.4px;color:#454545;font-weight:400;transform:scale(0.9,1.0);transform-origin:0 7.11px;-webkit-text-stroke:0.18px currentColor;">GETH</div>
<div class="t" style="left:938.50px;top:471.55px;font-size:8.4px;line-height:8.4px;color:#454545;font-weight:400;transform:scale(0.9956,1.0);transform-origin:0 7.11px;-webkit-text-stroke:0.18px currentColor;">a month ago</div>
<div class="abs" style="left:322.5px;top:494.49px;width:715px;height:1px;background:#F1F1F3"></div>
<div class="abs" style="left:323.3px;top:507.69px;width:40.5px;height:13.4px;background:#C8D7FA;border-radius:2.5px"></div>
<div class="t" style="left:327.30px;top:510.22px;font-size:8.7px;line-height:8.7px;color:#2A3288;font-weight:400;-webkit-text-stroke:0.18px currentColor;">Transfer</div>
<div class="t" style="left:438.75px;top:510.28px;font-size:8.4px;line-height:8.4px;color:#CDCDCD;font-weight:400;-webkit-text-stroke:0.18px currentColor;">send</div>
<div class="t" style="left:538.75px;top:510.11px;font-size:8.6px;line-height:8.6px;color:#6D68E6;font-weight:400;transform:scale(0.9948,1.0);transform-origin:0 7.28px;-webkit-text-stroke:0.18px currentColor;">0x9ec...1484e</div>
<svg class="av" style="left:638.10px;top:506.39px;width:13.8px;height:13.8px" viewBox="0 0 8 8"><defs><clipPath id="c645513"><circle cx="4" cy="4" r="4"/></clipPath></defs><g clip-path="url(#c645513)" shape-rendering="crispEdges"><rect x="0" y="0" width="1.02" height="1.02" fill="#D6D040"/><rect x="1" y="0" width="1.02" height="1.02" fill="#D6D040"/><rect x="2" y="0" width="1.02" height="1.02" fill="#D6D040"/><rect x="3" y="0" width="1.02" height="1.02" fill="#3F98D8"/><rect x="4" y="0" width="1.02" height="1.02" fill="#3F98D8"/><rect x="5" y="0" width="1.02" height="1.02" fill="#D6D040"/><rect x="6" y="0" width="1.02" height="1.02" fill="#D6D040"/><rect x="7" y="0" width="1.02" height="1.02" fill="#D6D040"/><rect x="0" y="1" width="1.02" height="1.02" fill="#D6D040"/><rect x="1" y="1" width="1.02" height="1.02" fill="#D6D040"/><rect x="2" y="1" width="1.02" height="1.02" fill="#3F98D8"/><rect x="3" y="1" width="1.02" height="1.02" fill="#D6D040"/><rect x="4" y="1" width="1.02" height="1.02" fill="#D6D040"/><rect x="5" y="1" width="1.02" height="1.02" fill="#3F98D8"/><rect x="6" y="1" width="1.02" height="1.02" fill="#D6D040"/><rect x="7" y="1" width="1.02" height="1.02" fill="#D6D040"/><rect x="0" y="2" width="1.02" height="1.02" fill="#3F98D8"/><rect x="1" y="2" width="1.02" height="1.02" fill="#D6D040"/><rect x="2" y="2" width="1.02" height="1.02" fill="#D6D040"/><rect x="3" y="2" width="1.02" height="1.02" fill="#D6D040"/><rect x="4" y="2" width="1.02" height="1.02" fill="#D6D040"/><rect x="5" y="2" width="1.02" height="1.02" fill="#D6D040"/><rect x="6" y="2" width="1.02" height="1.02" fill="#D6D040"/><rect x="7" y="2" width="1.02" height="1.02" fill="#3F98D8"/><rect x="0" y="3" width="1.02" height="1.02" fill="#3F98D8"/><rect x="1" y="3" width="1.02" height="1.02" fill="#A8D870"/><rect x="2" y="3" width="1.02" height="1.02" fill="#D6D040"/><rect x="3" y="3" width="1.02" height="1.02" fill="#3F98D8"/><rect x="4" y="3" width="1.02" height="1.02" fill="#3F98D8"/><rect x="5" y="3" width="1.02" height="1.02" fill="#D6D040"/><rect x="6" y="3" width="1.02" height="1.02" fill="#A8D870"/><rect x="7" y="3" width="1.02" height="1.02" fill="#3F98D8"/><rect x="0" y="4" width="1.02" height="1.02" fill="#3F98D8"/><rect x="1" y="4" width="1.02" height="1.02" fill="#3F98D8"/><rect x="2" y="4" width="1.02" height="1.02" fill="#D6D040"/><rect x="3" y="4" width="1.02" height="1.02" fill="#D6D040"/><rect x="4" y="4" width="1.02" height="1.02" fill="#D6D040"/><rect x="5" y="4" width="1.02" height="1.02" fill="#D6D040"/><rect x="6" y="4" width="1.02" height="1.02" fill="#3F98D8"/><rect x="7" y="4" width="1.02" height="1.02" fill="#3F98D8"/><rect x="0" y="5" width="1.02" height="1.02" fill="#D6D040"/><rect x="1" y="5" width="1.02" height="1.02" fill="#3F98D8"/><rect x="2" y="5" width="1.02" height="1.02" fill="#D6D040"/><rect x="3" y="5" width="1.02" height="1.02" fill="#3F98D8"/><rect x="4" y="5" width="1.02" height="1.02" fill="#3F98D8"/><rect x="5" y="5" width="1.02" height="1.02" fill="#D6D040"/><rect x="6" y="5" width="1.02" height="1.02" fill="#3F98D8"/><rect x="7" y="5" width="1.02" height="1.02" fill="#D6D040"/><rect x="0" y="6" width="1.02" height="1.02" fill="#D6D040"/><rect x="1" y="6" width="1.02" height="1.02" fill="#D6D040"/><rect x="2" y="6" width="1.02" height="1.02" fill="#3F98D8"/><rect x="3" y="6" width="1.02" height="1.02" fill="#3F98D8"/><rect x="4" y="6" width="1.02" height="1.02" fill="#3F98D8"/><rect x="5" y="6" width="1.02" height="1.02" fill="#3F98D8"/><rect x="6" y="6" width="1.02" height="1.02" fill="#D6D040"/><rect x="7" y="6" width="1.02" height="1.02" fill="#D6D040"/><rect x="0" y="7" width="1.02" height="1.02" fill="#D6D040"/><rect x="1" y="7" width="1.02" height="1.02" fill="#D6D040"/><rect x="2" y="7" width="1.02" height="1.02" fill="#D6D040"/><rect x="3" y="7" width="1.02" height="1.02" fill="#D6D040"/><rect x="4" y="7" width="1.02" height="1.02" fill="#D6D040"/><rect x="5" y="7" width="1.02" height="1.02" fill="#D6D040"/><rect x="6" y="7" width="1.02" height="1.02" fill="#D6D040"/><rect x="7" y="7" width="1.02" height="1.02" fill="#D6D040"/></g></svg>
<div class="t" style="left:658.50px;top:510.11px;font-size:8.6px;line-height:8.6px;color:#6D68E6;font-weight:400;transform:scale(1.0005,1.0);transform-origin:0 7.28px;-webkit-text-stroke:0.18px currentColor;">0x54a...B5e49</div>
<svg class="av" style="left:738.10px;top:506.39px;width:13.8px;height:13.8px" viewBox="0 0 8 8"><defs><clipPath id="c745513"><circle cx="4" cy="4" r="4"/></clipPath></defs><g clip-path="url(#c745513)" shape-rendering="crispEdges"><rect x="0" y="0" width="1.02" height="1.02" fill="#3277D6"/><rect x="1" y="0" width="1.02" height="1.02" fill="#3277D6"/><rect x="2" y="0" width="1.02" height="1.02" fill="#3277D6"/><rect x="3" y="0" width="1.02" height="1.02" fill="#E0633A"/><rect x="4" y="0" width="1.02" height="1.02" fill="#E0633A"/><rect x="5" y="0" width="1.02" height="1.02" fill="#3277D6"/><rect x="6" y="0" width="1.02" height="1.02" fill="#3277D6"/><rect x="7" y="0" width="1.02" height="1.02" fill="#3277D6"/><rect x="0" y="1" width="1.02" height="1.02" fill="#3277D6"/><rect x="1" y="1" width="1.02" height="1.02" fill="#3277D6"/><rect x="2" y="1" width="1.02" height="1.02" fill="#3277D6"/><rect x="3" y="1" width="1.02" height="1.02" fill="#E0633A"/><rect x="4" y="1" width="1.02" height="1.02" fill="#E0633A"/><rect x="5" y="1" width="1.02" height="1.02" fill="#3277D6"/><rect x="6" y="1" width="1.02" height="1.02" fill="#3277D6"/><rect x="7" y="1" width="1.02" height="1.02" fill="#3277D6"/><rect x="0" y="2" width="1.02" height="1.02" fill="#3277D6"/><rect x="1" y="2" width="1.02" height="1.02" fill="#3277D6"/><rect x="2" y="2" width="1.02" height="1.02" fill="#3277D6"/><rect x="3" y="2" width="1.02" height="1.02" fill="#4F9A62"/><rect x="4" y="2" width="1.02" height="1.02" fill="#4F9A62"/><rect x="5" y="2" width="1.02" height="1.02" fill="#3277D6"/><rect x="6" y="2" width="1.02" height="1.02" fill="#3277D6"/><rect x="7" y="2" width="1.02" height="1.02" fill="#3277D6"/><rect x="0" y="3" width="1.02" height="1.02" fill="#4F9A62"/><rect x="1" y="3" width="1.02" height="1.02" fill="#4F9A62"/><rect x="2" y="3" width="1.02" height="1.02" fill="#3277D6"/><rect x="3" y="3" width="1.02" height="1.02" fill="#4F9A62"/><rect x="4" y="3" width="1.02" height="1.02" fill="#4F9A62"/><rect x="5" y="3" width="1.02" height="1.02" fill="#3277D6"/><rect x="6" y="3" width="1.02" height="1.02" fill="#4F9A62"/><rect x="7" y="3" width="1.02" height="1.02" fill="#4F9A62"/><rect x="0" y="4" width="1.02" height="1.02" fill="#4F9A62"/><rect x="1" y="4" width="1.02" height="1.02" fill="#4F9A62"/><rect x="2" y="4" width="1.02" height="1.02" fill="#3277D6"/><rect x="3" y="4" width="1.02" height="1.02" fill="#4F9A62"/><rect x="4" y="4" width="1.02" height="1.02" fill="#4F9A62"/><rect x="5" y="4" width="1.02" height="1.02" fill="#3277D6"/><rect x="6" y="4" width="1.02" height="1.02" fill="#4F9A62"/><rect x="7" y="4" width="1.02" height="1.02" fill="#4F9A62"/><rect x="0" y="5" width="1.02" height="1.02" fill="#3277D6"/><rect x="1" y="5" width="1.02" height="1.02" fill="#3277D6"/><rect x="2" y="5" width="1.02" height="1.02" fill="#3277D6"/><rect x="3" y="5" width="1.02" height="1.02" fill="#3277D6"/><rect x="4" y="5" width="1.02" height="1.02" fill="#3277D6"/><rect x="5" y="5" width="1.02" height="1.02" fill="#3277D6"/><rect x="6" y="5" width="1.02" height="1.02" fill="#3277D6"/><rect x="7" y="5" width="1.02" height="1.02" fill="#3277D6"/><rect x="0" y="6" width="1.02" height="1.02" fill="#C84040"/><rect x="1" y="6" width="1.02" height="1.02" fill="#3277D6"/><rect x="2" y="6" width="1.02" height="1.02" fill="#3277D6"/><rect x="3" y="6" width="1.02" height="1.02" fill="#E0633A"/><rect x="4" y="6" width="1.02" height="1.02" fill="#E0633A"/><rect x="5" y="6" width="1.02" height="1.02" fill="#3277D6"/><rect x="6" y="6" width="1.02" height="1.02" fill="#3277D6"/><rect x="7" y="6" width="1.02" height="1.02" fill="#C84040"/><rect x="0" y="7" width="1.02" height="1.02" fill="#4F9A62"/><rect x="1" y="7" width="1.02" height="1.02" fill="#4F9A62"/><rect x="2" y="7" width="1.02" height="1.02" fill="#3277D6"/><rect x="3" y="7" width="1.02" height="1.02" fill="#4F9A62"/><rect x="4" y="7" width="1.02" height="1.02" fill="#4F9A62"/><rect x="5" y="7" width="1.02" height="1.02" fill="#3277D6"/><rect x="6" y="7" width="1.02" height="1.02" fill="#4F9A62"/><rect x="7" y="7" width="1.02" height="1.02" fill="#4F9A62"/></g></svg>
<div class="t" style="left:758.50px;top:510.11px;font-size:8.6px;line-height:8.6px;color:#6D68E6;font-weight:400;transform:scale(0.9892,1.0);transform-origin:0 7.28px;-webkit-text-stroke:0.18px currentColor;">0x3B4...eD6C6</div>
<div class="t" style="left:838.00px;top:509.86px;font-size:8.89px;line-height:8.89px;color:#454545;font-weight:400;-webkit-text-stroke:0.18px currentColor;">8,000.00...</div>
<div class="t" style="left:883.40px;top:510.28px;font-size:8.4px;line-height:8.4px;color:#454545;font-weight:400;transform:scale(0.9,1.0);transform-origin:0 7.11px;-webkit-text-stroke:0.18px currentColor;">GETH</div>
<div class="t" style="left:938.50px;top:510.28px;font-size:8.4px;line-height:8.4px;color:#454545;font-weight:400;transform:scale(0.9956,1.0);transform-origin:0 7.11px;-webkit-text-stroke:0.18px currentColor;">a month ago</div>
<div class="abs" style="left:322.5px;top:533.22px;width:715px;height:1px;background:#F1F1F3"></div>
<div class="abs" style="left:323.3px;top:546.42px;width:40.5px;height:13.4px;background:#C8D7FA;border-radius:2.5px"></div>
<div class="t" style="left:327.30px;top:548.95px;font-size:8.7px;line-height:8.7px;color:#2A3288;font-weight:400;-webkit-text-stroke:0.18px currentColor;">Transfer</div>
<div class="t" style="left:438.75px;top:549.01px;font-size:8.4px;line-height:8.4px;color:#CDCDCD;font-weight:400;-webkit-text-stroke:0.18px currentColor;">send</div>
<div class="t" style="left:538.75px;top:548.84px;font-size:8.6px;line-height:8.6px;color:#6D68E6;font-weight:400;transform:scale(0.9642,1.0);transform-origin:0 7.28px;-webkit-text-stroke:0.18px currentColor;">0xf10...12d04</div>
<svg class="av" style="left:638.10px;top:545.12px;width:13.8px;height:13.8px" viewBox="0 0 8 8"><defs><clipPath id="c645552"><circle cx="4" cy="4" r="4"/></clipPath></defs><g clip-path="url(#c645552)" shape-rendering="crispEdges"><rect x="0" y="0" width="1.02" height="1.02" fill="#D6D040"/><rect x="1" y="0" width="1.02" height="1.02" fill="#D6D040"/><rect x="2" y="0" width="1.02" height="1.02" fill="#D6D040"/><rect x="3" y="0" width="1.02" height="1.02" fill="#3F98D8"/><rect x="4" y="0" width="1.02" height="1.02" fill="#3F98D8"/><rect x="5" y="0" width="1.02" height="1.02" fill="#D6D040"/><rect x="6" y="0" width="1.02" height="1.02" fill="#D6D040"/><rect x="7" y="0" width="1.02" height="1.02" fill="#D6D040"/><rect x="0" y="1" width="1.02" height="1.02" fill="#D6D040"/><rect x="1" y="1" width="1.02" height="1.02" fill="#D6D040"/><rect x="2" y="1" width="1.02" height="1.02" fill="#3F98D8"/><rect x="3" y="1" width="1.02" height="1.02" fill="#D6D040"/><rect x="4" y="1" width="1.02" height="1.02" fill="#D6D040"/><rect x="5" y="1" width="1.02" height="1.02" fill="#3F98D8"/><rect x="6" y="1" width="1.02" height="1.02" fill="#D6D040"/><rect x="7" y="1" width="1.02" height="1.02" fill="#D6D040"/><rect x="0" y="2" width="1.02" height="1.02" fill="#3F98D8"/><rect x="1" y="2" width="1.02" height="1.02" fill="#D6D040"/><rect x="2" y="2" width="1.02" height="1.02" fill="#D6D040"/><rect x="3" y="2" width="1.02" height="1.02" fill="#D6D040"/><rect x="4" y="2" width="1.02" height="1.02" fill="#D6D040"/><rect x="5" y="2" width="1.02" height="1.02" fill="#D6D040"/><rect x="6" y="2" width="1.02" height="1.02" fill="#D6D040"/><rect x="7" y="2" width="1.02" height="1.02" fill="#3F98D8"/><rect x="0" y="3" width="1.02" height="1.02" fill="#3F98D8"/><rect x="1" y="3" width="1.02" height="1.02" fill="#A8D870"/><rect x="2" y="3" width="1.02" height="1.02" fill="#D6D040"/><rect x="3" y="3" width="1.02" height="1.02" fill="#3F98D8"/><rect x="4" y="3" width="1.02" height="1.02" fill="#3F98D8"/><rect x="5" y="3" width="1.02" height="1.02" fill="#D6D040"/><rect x="6" y="3" width="1.02" height="1.02" fill="#A8D870"/><rect x="7" y="3" width="1.02" height="1.02" fill="#3F98D8"/><rect x="0" y="4" width="1.02" height="1.02" fill="#3F98D8"/><rect x="1" y="4" width="1.02" height="1.02" fill="#3F98D8"/><rect x="2" y="4" width="1.02" height="1.02" fill="#D6D040"/><rect x="3" y="4" width="1.02" height="1.02" fill="#D6D040"/><rect x="4" y="4" width="1.02" height="1.02" fill="#D6D040"/><rect x="5" y="4" width="1.02" height="1.02" fill="#D6D040"/><rect x="6" y="4" width="1.02" height="1.02" fill="#3F98D8"/><rect x="7" y="4" width="1.02" height="1.02" fill="#3F98D8"/><rect x="0" y="5" width="1.02" height="1.02" fill="#D6D040"/><rect x="1" y="5" width="1.02" height="1.02" fill="#3F98D8"/><rect x="2" y="5" width="1.02" height="1.02" fill="#D6D040"/><rect x="3" y="5" width="1.02" height="1.02" fill="#3F98D8"/><rect x="4" y="5" width="1.02" height="1.02" fill="#3F98D8"/><rect x="5" y="5" width="1.02" height="1.02" fill="#D6D040"/><rect x="6" y="5" width="1.02" height="1.02" fill="#3F98D8"/><rect x="7" y="5" width="1.02" height="1.02" fill="#D6D040"/><rect x="0" y="6" width="1.02" height="1.02" fill="#D6D040"/><rect x="1" y="6" width="1.02" height="1.02" fill="#D6D040"/><rect x="2" y="6" width="1.02" height="1.02" fill="#3F98D8"/><rect x="3" y="6" width="1.02" height="1.02" fill="#3F98D8"/><rect x="4" y="6" width="1.02" height="1.02" fill="#3F98D8"/><rect x="5" y="6" width="1.02" height="1.02" fill="#3F98D8"/><rect x="6" y="6" width="1.02" height="1.02" fill="#D6D040"/><rect x="7" y="6" width="1.02" height="1.02" fill="#D6D040"/><rect x="0" y="7" width="1.02" height="1.02" fill="#D6D040"/><rect x="1" y="7" width="1.02" height="1.02" fill="#D6D040"/><rect x="2" y="7" width="1.02" height="1.02" fill="#D6D040"/><rect x="3" y="7" width="1.02" height="1.02" fill="#D6D040"/><rect x="4" y="7" width="1.02" height="1.02" fill="#D6D040"/><rect x="5" y="7" width="1.02" height="1.02" fill="#D6D040"/><rect x="6" y="7" width="1.02" height="1.02" fill="#D6D040"/><rect x="7" y="7" width="1.02" height="1.02" fill="#D6D040"/></g></svg>
<div class="t" style="left:658.50px;top:548.84px;font-size:8.6px;line-height:8.6px;color:#6D68E6;font-weight:400;transform:scale(1.0005,1.0);transform-origin:0 7.28px;-webkit-text-stroke:0.18px currentColor;">0x54a...B5e49</div>
<svg class="av" style="left:738.10px;top:545.12px;width:13.8px;height:13.8px" viewBox="0 0 8 8"><defs><clipPath id="c745552"><circle cx="4" cy="4" r="4"/></clipPath></defs><g clip-path="url(#c745552)" shape-rendering="crispEdges"><rect x="0" y="0" width="1.02" height="1.02" fill="#8FD060"/><rect x="1" y="0" width="1.02" height="1.02" fill="#B3AC48"/><rect x="2" y="0" width="1.02" height="1.02" fill="#B3AC48"/><rect x="3" y="0" width="1.02" height="1.02" fill="#B3AC48"/><rect x="4" y="0" width="1.02" height="1.02" fill="#B3AC48"/><rect x="5" y="0" width="1.02" height="1.02" fill="#B3AC48"/><rect x="6" y="0" width="1.02" height="1.02" fill="#B3AC48"/><rect x="7" y="0" width="1.02" height="1.02" fill="#8FD060"/><rect x="0" y="1" width="1.02" height="1.02" fill="#B3AC48"/><rect x="1" y="1" width="1.02" height="1.02" fill="#B3AC48"/><rect x="2" y="1" width="1.02" height="1.02" fill="#C83A38"/><rect x="3" y="1" width="1.02" height="1.02" fill="#2C5BC0"/><rect x="4" y="1" width="1.02" height="1.02" fill="#2C5BC0"/><rect x="5" y="1" width="1.02" height="1.02" fill="#C83A38"/><rect x="6" y="1" width="1.02" height="1.02" fill="#B3AC48"/><rect x="7" y="1" width="1.02" height="1.02" fill="#B3AC48"/><rect x="0" y="2" width="1.02" height="1.02" fill="#2C5BC0"/><rect x="1" y="2" width="1.02" height="1.02" fill="#2C5BC0"/><rect x="2" y="2" width="1.02" height="1.02" fill="#C83A38"/><rect x="3" y="2" width="1.02" height="1.02" fill="#B3AC48"/><rect x="4" y="2" width="1.02" height="1.02" fill="#B3AC48"/><rect x="5" y="2" width="1.02" height="1.02" fill="#C83A38"/><rect x="6" y="2" width="1.02" height="1.02" fill="#2C5BC0"/><rect x="7" y="2" width="1.02" height="1.02" fill="#2C5BC0"/><rect x="0" y="3" width="1.02" height="1.02" fill="#B3AC48"/><rect x="1" y="3" width="1.02" height="1.02" fill="#B3AC48"/><rect x="2" y="3" width="1.02" height="1.02" fill="#B3AC48"/><rect x="3" y="3" width="1.02" height="1.02" fill="#B3AC48"/><rect x="4" y="3" width="1.02" height="1.02" fill="#B3AC48"/><rect x="5" y="3" width="1.02" height="1.02" fill="#B3AC48"/><rect x="6" y="3" width="1.02" height="1.02" fill="#B3AC48"/><rect x="7" y="3" width="1.02" height="1.02" fill="#B3AC48"/><rect x="0" y="4" width="1.02" height="1.02" fill="#B3AC48"/><rect x="1" y="4" width="1.02" height="1.02" fill="#B3AC48"/><rect x="2" y="4" width="1.02" height="1.02" fill="#2C5BC0"/><rect x="3" y="4" width="1.02" height="1.02" fill="#B3AC48"/><rect x="4" y="4" width="1.02" height="1.02" fill="#B3AC48"/><rect x="5" y="4" width="1.02" height="1.02" fill="#2C5BC0"/><rect x="6" y="4" width="1.02" height="1.02" fill="#B3AC48"/><rect x="7" y="4" width="1.02" height="1.02" fill="#B3AC48"/><rect x="0" y="5" width="1.02" height="1.02" fill="#B3AC48"/><rect x="1" y="5" width="1.02" height="1.02" fill="#B3AC48"/><rect x="2" y="5" width="1.02" height="1.02" fill="#C83A38"/><rect x="3" y="5" width="1.02" height="1.02" fill="#C83A38"/><rect x="4" y="5" width="1.02" height="1.02" fill="#C83A38"/><rect x="5" y="5" width="1.02" height="1.02" fill="#C83A38"/><rect x="6" y="5" width="1.02" height="1.02" fill="#B3AC48"/><rect x="7" y="5" width="1.02" height="1.02" fill="#B3AC48"/><rect x="0" y="6" width="1.02" height="1.02" fill="#B3AC48"/><rect x="1" y="6" width="1.02" height="1.02" fill="#2C5BC0"/><rect x="2" y="6" width="1.02" height="1.02" fill="#2C5BC0"/><rect x="3" y="6" width="1.02" height="1.02" fill="#2C5BC0"/><rect x="4" y="6" width="1.02" height="1.02" fill="#2C5BC0"/><rect x="5" y="6" width="1.02" height="1.02" fill="#2C5BC0"/><rect x="6" y="6" width="1.02" height="1.02" fill="#2C5BC0"/><rect x="7" y="6" width="1.02" height="1.02" fill="#B3AC48"/><rect x="0" y="7" width="1.02" height="1.02" fill="#2C5BC0"/><rect x="1" y="7" width="1.02" height="1.02" fill="#B3AC48"/><rect x="2" y="7" width="1.02" height="1.02" fill="#2C5BC0"/><rect x="3" y="7" width="1.02" height="1.02" fill="#C83A38"/><rect x="4" y="7" width="1.02" height="1.02" fill="#C83A38"/><rect x="5" y="7" width="1.02" height="1.02" fill="#2C5BC0"/><rect x="6" y="7" width="1.02" height="1.02" fill="#B3AC48"/><rect x="7" y="7" width="1.02" height="1.02" fill="#2C5BC0"/></g></svg>
<div class="t" style="left:758.50px;top:548.84px;font-size:8.6px;line-height:8.6px;color:#6D68E6;font-weight:400;transform:scale(0.9873,1.0);transform-origin:0 7.28px;-webkit-text-stroke:0.18px currentColor;">0x6e5...6eAEb</div>
<div class="t" style="left:838.00px;top:548.59px;font-size:8.89px;line-height:8.89px;color:#454545;font-weight:400;-webkit-text-stroke:0.18px currentColor;">32,000.0...</div>
<div class="t" style="left:883.40px;top:549.01px;font-size:8.4px;line-height:8.4px;color:#454545;font-weight:400;transform:scale(0.9,1.0);transform-origin:0 7.11px;-webkit-text-stroke:0.18px currentColor;">GETH</div>
<div class="t" style="left:938.50px;top:549.01px;font-size:8.4px;line-height:8.4px;color:#454545;font-weight:400;transform:scale(1.0078,1.0);transform-origin:0 7.11px;-webkit-text-stroke:0.18px currentColor;">2 months ago</div>
<div class="abs" style="left:322.5px;top:571.95px;width:715px;height:1px;background:#F1F1F3"></div>
<div class="abs" style="left:323.3px;top:585.15px;width:40.5px;height:13.4px;background:#C8D7FA;border-radius:2.5px"></div>
<div class="t" style="left:327.30px;top:587.68px;font-size:8.7px;line-height:8.7px;color:#2A3288;font-weight:400;-webkit-text-stroke:0.18px currentColor;">Transfer</div>
<div class="t" style="left:438.75px;top:587.74px;font-size:8.4px;line-height:8.4px;color:#CDCDCD;font-weight:400;-webkit-text-stroke:0.18px currentColor;">send</div>
<div class="t" style="left:538.75px;top:587.57px;font-size:8.6px;line-height:8.6px;color:#6D68E6;font-weight:400;transform:scale(0.9675,1.0);transform-origin:0 7.28px;-webkit-text-stroke:0.18px currentColor;">0xe15...5b785</div>
<svg class="av" style="left:638.10px;top:583.85px;width:13.8px;height:13.8px" viewBox="0 0 8 8"><defs><clipPath id="c645590"><circle cx="4" cy="4" r="4"/></clipPath></defs><g clip-path="url(#c645590)" shape-rendering="crispEdges"><rect x="0" y="0" width="1.02" height="1.02" fill="#D6D040"/><rect x="1" y="0" width="1.02" height="1.02" fill="#D6D040"/><rect x="2" y="0" width="1.02" height="1.02" fill="#D6D040"/><rect x="3" y="0" width="1.02" height="1.02" fill="#3F98D8"/><rect x="4" y="0" width="1.02" height="1.02" fill="#3F98D8"/><rect x="5" y="0" width="1.02" height="1.02" fill="#D6D040"/><rect x="6" y="0" width="1.02" height="1.02" fill="#D6D040"/><rect x="7" y="0" width="1.02" height="1.02" fill="#D6D040"/><rect x="0" y="1" width="1.02" height="1.02" fill="#D6D040"/><rect x="1" y="1" width="1.02" height="1.02" fill="#D6D040"/><rect x="2" y="1" width="1.02" height="1.02" fill="#3F98D8"/><rect x="3" y="1" width="1.02" height="1.02" fill="#D6D040"/><rect x="4" y="1" width="1.02" height="1.02" fill="#D6D040"/><rect x="5" y="1" width="1.02" height="1.02" fill="#3F98D8"/><rect x="6" y="1" width="1.02" height="1.02" fill="#D6D040"/><rect x="7" y="1" width="1.02" height="1.02" fill="#D6D040"/><rect x="0" y="2" width="1.02" height="1.02" fill="#3F98D8"/><rect x="1" y="2" width="1.02" height="1.02" fill="#D6D040"/><rect x="2" y="2" width="1.02" height="1.02" fill="#D6D040"/><rect x="3" y="2" width="1.02" height="1.02" fill="#D6D040"/><rect x="4" y="2" width="1.02" height="1.02" fill="#D6D040"/><rect x="5" y="2" width="1.02" height="1.02" fill="#D6D040"/><rect x="6" y="2" width="1.02" height="1.02" fill="#D6D040"/><rect x="7" y="2" width="1.02" height="1.02" fill="#3F98D8"/><rect x="0" y="3" width="1.02" height="1.02" fill="#3F98D8"/><rect x="1" y="3" width="1.02" height="1.02" fill="#A8D870"/><rect x="2" y="3" width="1.02" height="1.02" fill="#D6D040"/><rect x="3" y="3" width="1.02" height="1.02" fill="#3F98D8"/><rect x="4" y="3" width="1.02" height="1.02" fill="#3F98D8"/><rect x="5" y="3" width="1.02" height="1.02" fill="#D6D040"/><rect x="6" y="3" width="1.02" height="1.02" fill="#A8D870"/><rect x="7" y="3" width="1.02" height="1.02" fill="#3F98D8"/><rect x="0" y="4" width="1.02" height="1.02" fill="#3F98D8"/><rect x="1" y="4" width="1.02" height="1.02" fill="#3F98D8"/><rect x="2" y="4" width="1.02" height="1.02" fill="#D6D040"/><rect x="3" y="4" width="1.02" height="1.02" fill="#D6D040"/><rect x="4" y="4" width="1.02" height="1.02" fill="#D6D040"/><rect x="5" y="4" width="1.02" height="1.02" fill="#D6D040"/><rect x="6" y="4" width="1.02" height="1.02" fill="#3F98D8"/><rect x="7" y="4" width="1.02" height="1.02" fill="#3F98D8"/><rect x="0" y="5" width="1.02" height="1.02" fill="#D6D040"/><rect x="1" y="5" width="1.02" height="1.02" fill="#3F98D8"/><rect x="2" y="5" width="1.02" height="1.02" fill="#D6D040"/><rect x="3" y="5" width="1.02" height="1.02" fill="#3F98D8"/><rect x="4" y="5" width="1.02" height="1.02" fill="#3F98D8"/><rect x="5" y="5" width="1.02" height="1.02" fill="#D6D040"/><rect x="6" y="5" width="1.02" height="1.02" fill="#3F98D8"/><rect x="7" y="5" width="1.02" height="1.02" fill="#D6D040"/><rect x="0" y="6" width="1.02" height="1.02" fill="#D6D040"/><rect x="1" y="6" width="1.02" height="1.02" fill="#D6D040"/><rect x="2" y="6" width="1.02" height="1.02" fill="#3F98D8"/><rect x="3" y="6" width="1.02" height="1.02" fill="#3F98D8"/><rect x="4" y="6" width="1.02" height="1.02" fill="#3F98D8"/><rect x="5" y="6" width="1.02" height="1.02" fill="#3F98D8"/><rect x="6" y="6" width="1.02" height="1.02" fill="#D6D040"/><rect x="7" y="6" width="1.02" height="1.02" fill="#D6D040"/><rect x="0" y="7" width="1.02" height="1.02" fill="#D6D040"/><rect x="1" y="7" width="1.02" height="1.02" fill="#D6D040"/><rect x="2" y="7" width="1.02" height="1.02" fill="#D6D040"/><rect x="3" y="7" width="1.02" height="1.02" fill="#D6D040"/><rect x="4" y="7" width="1.02" height="1.02" fill="#D6D040"/><rect x="5" y="7" width="1.02" height="1.02" fill="#D6D040"/><rect x="6" y="7" width="1.02" height="1.02" fill="#D6D040"/><rect x="7" y="7" width="1.02" height="1.02" fill="#D6D040"/></g></svg>
<div class="t" style="left:658.50px;top:587.57px;font-size:8.6px;line-height:8.6px;color:#6D68E6;font-weight:400;transform:scale(1.0005,1.0);transform-origin:0 7.28px;-webkit-text-stroke:0.18px currentColor;">0x54a...B5e49</div>
<svg class="av" style="left:738.10px;top:583.85px;width:13.8px;height:13.8px" viewBox="0 0 8 8"><defs><clipPath id="c745590"><circle cx="4" cy="4" r="4"/></clipPath></defs><g clip-path="url(#c745590)" shape-rendering="crispEdges"><rect x="0" y="0" width="1.02" height="1.02" fill="#8FD060"/><rect x="1" y="0" width="1.02" height="1.02" fill="#B3AC48"/><rect x="2" y="0" width="1.02" height="1.02" fill="#B3AC48"/><rect x="3" y="0" width="1.02" height="1.02" fill="#B3AC48"/><rect x="4" y="0" width="1.02" height="1.02" fill="#B3AC48"/><rect x="5" y="0" width="1.02" height="1.02" fill="#B3AC48"/><rect x="6" y="0" width="1.02" height="1.02" fill="#B3AC48"/><rect x="7" y="0" width="1.02" height="1.02" fill="#8FD060"/><rect x="0" y="1" width="1.02" height="1.02" fill="#B3AC48"/><rect x="1" y="1" width="1.02" height="1.02" fill="#B3AC48"/><rect x="2" y="1" width="1.02" height="1.02" fill="#C83A38"/><rect x="3" y="1" width="1.02" height="1.02" fill="#2C5BC0"/><rect x="4" y="1" width="1.02" height="1.02" fill="#2C5BC0"/><rect x="5" y="1" width="1.02" height="1.02" fill="#C83A38"/><rect x="6" y="1" width="1.02" height="1.02" fill="#B3AC48"/><rect x="7" y="1" width="1.02" height="1.02" fill="#B3AC48"/><rect x="0" y="2" width="1.02" height="1.02" fill="#2C5BC0"/><rect x="1" y="2" width="1.02" height="1.02" fill="#2C5BC0"/><rect x="2" y="2" width="1.02" height="1.02" fill="#C83A38"/><rect x="3" y="2" width="1.02" height="1.02" fill="#B3AC48"/><rect x="4" y="2" width="1.02" height="1.02" fill="#B3AC48"/><rect x="5" y="2" width="1.02" height="1.02" fill="#C83A38"/><rect x="6" y="2" width="1.02" height="1.02" fill="#2C5BC0"/><rect x="7" y="2" width="1.02" height="1.02" fill="#2C5BC0"/><rect x="0" y="3" width="1.02" height="1.02" fill="#B3AC48"/><rect x="1" y="3" width="1.02" height="1.02" fill="#B3AC48"/><rect x="2" y="3" width="1.02" height="1.02" fill="#B3AC48"/><rect x="3" y="3" width="1.02" height="1.02" fill="#B3AC48"/><rect x="4" y="3" width="1.02" height="1.02" fill="#B3AC48"/><rect x="5" y="3" width="1.02" height="1.02" fill="#B3AC48"/><rect x="6" y="3" width="1.02" height="1.02" fill="#B3AC48"/><rect x="7" y="3" width="1.02" height="1.02" fill="#B3AC48"/><rect x="0" y="4" width="1.02" height="1.02" fill="#B3AC48"/><rect x="1" y="4" width="1.02" height="1.02" fill="#B3AC48"/><rect x="2" y="4" width="1.02" height="1.02" fill="#2C5BC0"/><rect x="3" y="4" width="1.02" height="1.02" fill="#B3AC48"/><rect x="4" y="4" width="1.02" height="1.02" fill="#B3AC48"/><rect x="5" y="4" width="1.02" height="1.02" fill="#2C5BC0"/><rect x="6" y="4" width="1.02" height="1.02" fill="#B3AC48"/><rect x="7" y="4" width="1.02" height="1.02" fill="#B3AC48"/><rect x="0" y="5" width="1.02" height="1.02" fill="#B3AC48"/><rect x="1" y="5" width="1.02" height="1.02" fill="#B3AC48"/><rect x="2" y="5" width="1.02" height="1.02" fill="#C83A38"/><rect x="3" y="5" width="1.02" height="1.02" fill="#C83A38"/><rect x="4" y="5" width="1.02" height="1.02" fill="#C83A38"/><rect x="5" y="5" width="1.02" height="1.02" fill="#C83A38"/><rect x="6" y="5" width="1.02" height="1.02" fill="#B3AC48"/><rect x="7" y="5" width="1.02" height="1.02" fill="#B3AC48"/><rect x="0" y="6" width="1.02" height="1.02" fill="#B3AC48"/><rect x="1" y="6" width="1.02" height="1.02" fill="#2C5BC0"/><rect x="2" y="6" width="1.02" height="1.02" fill="#2C5BC0"/><rect x="3" y="6" width="1.02" height="1.02" fill="#2C5BC0"/><rect x="4" y="6" width="1.02" height="1.02" fill="#2C5BC0"/><rect x="5" y="6" width="1.02" height="1.02" fill="#2C5BC0"/><rect x="6" y="6" width="1.02" height="1.02" fill="#2C5BC0"/><rect x="7" y="6" width="1.02" height="1.02" fill="#B3AC48"/><rect x="0" y="7" width="1.02" height="1.02" fill="#2C5BC0"/><rect x="1" y="7" width="1.02" height="1.02" fill="#B3AC48"/><rect x="2" y="7" width="1.02" height="1.02" fill="#2C5BC0"/><rect x="3" y="7" width="1.02" height="1.02" fill="#C83A38"/><rect x="4" y="7" width="1.02" height="1.02" fill="#C83A38"/><rect x="5" y="7" width="1.02" height="1.02" fill="#2C5BC0"/><rect x="6" y="7" width="1.02" height="1.02" fill="#B3AC48"/><rect x="7" y="7" width="1.02" height="1.02" fill="#2C5BC0"/></g></svg>
<div class="t" style="left:758.50px;top:587.57px;font-size:8.6px;line-height:8.6px;color:#6D68E6;font-weight:400;transform:scale(0.9873,1.0);transform-origin:0 7.28px;-webkit-text-stroke:0.18px currentColor;">0x6e5...6eAEb</div>
<div class="t" style="left:838.00px;top:587.74px;font-size:8.39px;line-height:8.39px;color:#454545;font-weight:400;-webkit-text-stroke:0.18px currentColor;">1.000000...</div>
<div class="t" style="left:883.40px;top:587.74px;font-size:8.4px;line-height:8.4px;color:#454545;font-weight:400;transform:scale(0.9,1.0);transform-origin:0 7.11px;-webkit-text-stroke:0.18px currentColor;">GETH</div>
<div class="t" style="left:938.50px;top:587.74px;font-size:8.4px;line-height:8.4px;color:#454545;font-weight:400;transform:scale(1.0078,1.0);transform-origin:0 7.11px;-webkit-text-stroke:0.18px currentColor;">2 months ago</div>
<div class="abs" style="left:322.5px;top:610.68px;width:715px;height:1px;background:#F1F1F3"></div>
<div class="abs" style="left:323.3px;top:623.88px;width:40.5px;height:13.4px;background:#C8D7FA;border-radius:2.5px"></div>
<div class="t" style="left:327.30px;top:626.41px;font-size:8.7px;line-height:8.7px;color:#2A3288;font-weight:400;-webkit-text-stroke:0.18px currentColor;">Transfer</div>
<div class="t" style="left:438.75px;top:626.47px;font-size:8.4px;line-height:8.4px;color:#CDCDCD;font-weight:400;-webkit-text-stroke:0.18px currentColor;">send</div>
<div class="t" style="left:538.75px;top:626.30px;font-size:8.6px;line-height:8.6px;color:#6D68E6;font-weight:400;transform:scale(1.0306,1.0);transform-origin:0 7.28px;-webkit-text-stroke:0.18px currentColor;">0x6a0...fe0f3</div>
<svg class="av" style="left:638.10px;top:622.58px;width:13.8px;height:13.8px" viewBox="0 0 8 8"><defs><clipPath id="c645629"><circle cx="4" cy="4" r="4"/></clipPath></defs><g clip-path="url(#c645629)" shape-rendering="crispEdges"><rect x="0" y="0" width="1.02" height="1.02" fill="#D6D040"/><rect x="1" y="0" width="1.02" height="1.02" fill="#D6D040"/><rect x="2" y="0" width="1.02" height="1.02" fill="#D6D040"/><rect x="3" y="0" width="1.02" height="1.02" fill="#3F98D8"/><rect x="4" y="0" width="1.02" height="1.02" fill="#3F98D8"/><rect x="5" y="0" width="1.02" height="1.02" fill="#D6D040"/><rect x="6" y="0" width="1.02" height="1.02" fill="#D6D040"/><rect x="7" y="0" width="1.02" height="1.02" fill="#D6D040"/><rect x="0" y="1" width="1.02" height="1.02" fill="#D6D040"/><rect x="1" y="1" width="1.02" height="1.02" fill="#D6D040"/><rect x="2" y="1" width="1.02" height="1.02" fill="#3F98D8"/><rect x="3" y="1" width="1.02" height="1.02" fill="#D6D040"/><rect x="4" y="1" width="1.02" height="1.02" fill="#D6D040"/><rect x="5" y="1" width="1.02" height="1.02" fill="#3F98D8"/><rect x="6" y="1" width="1.02" height="1.02" fill="#D6D040"/><rect x="7" y="1" width="1.02" height="1.02" fill="#D6D040"/><rect x="0" y="2" width="1.02" height="1.02" fill="#3F98D8"/><rect x="1" y="2" width="1.02" height="1.02" fill="#D6D040"/><rect x="2" y="2" width="1.02" height="1.02" fill="#D6D040"/><rect x="3" y="2" width="1.02" height="1.02" fill="#D6D040"/><rect x="4" y="2" width="1.02" height="1.02" fill="#D6D040"/><rect x="5" y="2" width="1.02" height="1.02" fill="#D6D040"/><rect x="6" y="2" width="1.02" height="1.02" fill="#D6D040"/><rect x="7" y="2" width="1.02" height="1.02" fill="#3F98D8"/><rect x="0" y="3" width="1.02" height="1.02" fill="#3F98D8"/><rect x="1" y="3" width="1.02" height="1.02" fill="#A8D870"/><rect x="2" y="3" width="1.02" height="1.02" fill="#D6D040"/><rect x="3" y="3" width="1.02" height="1.02" fill="#3F98D8"/><rect x="4" y="3" width="1.02" height="1.02" fill="#3F98D8"/><rect x="5" y="3" width="1.02" height="1.02" fill="#D6D040"/><rect x="6" y="3" width="1.02" height="1.02" fill="#A8D870"/><rect x="7" y="3" width="1.02" height="1.02" fill="#3F98D8"/><rect x="0" y="4" width="1.02" height="1.02" fill="#3F98D8"/><rect x="1" y="4" width="1.02" height="1.02" fill="#3F98D8"/><rect x="2" y="4" width="1.02" height="1.02" fill="#D6D040"/><rect x="3" y="4" width="1.02" height="1.02" fill="#D6D040"/><rect x="4" y="4" width="1.02" height="1.02" fill="#D6D040"/><rect x="5" y="4" width="1.02" height="1.02" fill="#D6D040"/><rect x="6" y="4" width="1.02" height="1.02" fill="#3F98D8"/><rect x="7" y="4" width="1.02" height="1.02" fill="#3F98D8"/><rect x="0" y="5" width="1.02" height="1.02" fill="#D6D040"/><rect x="1" y="5" width="1.02" height="1.02" fill="#3F98D8"/><rect x="2" y="5" width="1.02" height="1.02" fill="#D6D040"/><rect x="3" y="5" width="1.02" height="1.02" fill="#3F98D8"/><rect x="4" y="5" width="1.02" height="1.02" fill="#3F98D8"/><rect x="5" y="5" width="1.02" height="1.02" fill="#D6D040"/><rect x="6" y="5" width="1.02" height="1.02" fill="#3F98D8"/><rect x="7" y="5" width="1.02" height="1.02" fill="#D6D040"/><rect x="0" y="6" width="1.02" height="1.02" fill="#D6D040"/><rect x="1" y="6" width="1.02" height="1.02" fill="#D6D040"/><rect x="2" y="6" width="1.02" height="1.02" fill="#3F98D8"/><rect x="3" y="6" width="1.02" height="1.02" fill="#3F98D8"/><rect x="4" y="6" width="1.02" height="1.02" fill="#3F98D8"/><rect x="5" y="6" width="1.02" height="1.02" fill="#3F98D8"/><rect x="6" y="6" width="1.02" height="1.02" fill="#D6D040"/><rect x="7" y="6" width="1.02" height="1.02" fill="#D6D040"/><rect x="0" y="7" width="1.02" height="1.02" fill="#D6D040"/><rect x="1" y="7" width="1.02" height="1.02" fill="#D6D040"/><rect x="2" y="7" width="1.02" height="1.02" fill="#D6D040"/><rect x="3" y="7" width="1.02" height="1.02" fill="#D6D040"/><rect x="4" y="7" width="1.02" height="1.02" fill="#D6D040"/><rect x="5" y="7" width="1.02" height="1.02" fill="#D6D040"/><rect x="6" y="7" width="1.02" height="1.02" fill="#D6D040"/><rect x="7" y="7" width="1.02" height="1.02" fill="#D6D040"/></g></svg>
<div class="t" style="left:658.50px;top:626.30px;font-size:8.6px;line-height:8.6px;color:#6D68E6;font-weight:400;transform:scale(1.0005,1.0);transform-origin:0 7.28px;-webkit-text-stroke:0.18px currentColor;">0x54a...B5e49</div>
<svg class="av" style="left:738.10px;top:622.58px;width:13.8px;height:13.8px" viewBox="0 0 8 8"><defs><clipPath id="c745629"><circle cx="4" cy="4" r="4"/></clipPath></defs><g clip-path="url(#c745629)" shape-rendering="crispEdges"><rect x="0" y="0" width="1.02" height="1.02" fill="#3277D6"/><rect x="1" y="0" width="1.02" height="1.02" fill="#3277D6"/><rect x="2" y="0" width="1.02" height="1.02" fill="#3277D6"/><rect x="3" y="0" width="1.02" height="1.02" fill="#E0633A"/><rect x="4" y="0" width="1.02" height="1.02" fill="#E0633A"/><rect x="5" y="0" width="1.02" height="1.02" fill="#3277D6"/><rect x="6" y="0" width="1.02" height="1.02" fill="#3277D6"/><rect x="7" y="0" width="1.02" height="1.02" fill="#3277D6"/><rect x="0" y="1" width="1.02" height="1.02" fill="#3277D6"/><rect x="1" y="1" width="1.02" height="1.02" fill="#3277D6"/><rect x="2" y="1" width="1.02" height="1.02" fill="#3277D6"/><rect x="3" y="1" width="1.02" height="1.02" fill="#E0633A"/><rect x="4" y="1" width="1.02" height="1.02" fill="#E0633A"/><rect x="5" y="1" width="1.02" height="1.02" fill="#3277D6"/><rect x="6" y="1" width="1.02" height="1.02" fill="#3277D6"/><rect x="7" y="1" width="1.02" height="1.02" fill="#3277D6"/><rect x="0" y="2" width="1.02" height="1.02" fill="#3277D6"/><rect x="1" y="2" width="1.02" height="1.02" fill="#3277D6"/><rect x="2" y="2" width="1.02" height="1.02" fill="#3277D6"/><rect x="3" y="2" width="1.02" height="1.02" fill="#4F9A62"/><rect x="4" y="2" width="1.02" height="1.02" fill="#4F9A62"/><rect x="5" y="2" width="1.02" height="1.02" fill="#3277D6"/><rect x="6" y="2" width="1.02" height="1.02" fill="#3277D6"/><rect x="7" y="2" width="1.02" height="1.02" fill="#3277D6"/><rect x="0" y="3" width="1.02" height="1.02" fill="#4F9A62"/><rect x="1" y="3" width="1.02" height="1.02" fill="#4F9A62"/><rect x="2" y="3" width="1.02" height="1.02" fill="#3277D6"/><rect x="3" y="3" width="1.02" height="1.02" fill="#4F9A62"/><rect x="4" y="3" width="1.02" height="1.02" fill="#4F9A62"/><rect x="5" y="3" width="1.02" height="1.02" fill="#3277D6"/><rect x="6" y="3" width="1.02" height="1.02" fill="#4F9A62"/><rect x="7" y="3" width="1.02" height="1.02" fill="#4F9A62"/><rect x="0" y="4" width="1.02" height="1.02" fill="#4F9A62"/><rect x="1" y="4" width="1.02" height="1.02" fill="#4F9A62"/><rect x="2" y="4" width="1.02" height="1.02" fill="#3277D6"/><rect x="3" y="4" width="1.02" height="1.02" fill="#4F9A62"/><rect x="4" y="4" width="1.02" height="1.02" fill="#4F9A62"/><rect x="5" y="4" width="1.02" height="1.02" fill="#3277D6"/><rect x="6" y="4" width="1.02" height="1.02" fill="#4F9A62"/><rect x="7" y="4" width="1.02" height="1.02" fill="#4F9A62"/><rect x="0" y="5" width="1.02" height="1.02" fill="#3277D6"/><rect x="1" y="5" width="1.02" height="1.02" fill="#3277D6"/><rect x="2" y="5" width="1.02" height="1.02" fill="#3277D6"/><rect x="3" y="5" width="1.02" height="1.02" fill="#3277D6"/><rect x="4" y="5" width="1.02" height="1.02" fill="#3277D6"/><rect x="5" y="5" width="1.02" height="1.02" fill="#3277D6"/><rect x="6" y="5" width="1.02" height="1.02" fill="#3277D6"/><rect x="7" y="5" width="1.02" height="1.02" fill="#3277D6"/><rect x="0" y="6" width="1.02" height="1.02" fill="#C84040"/><rect x="1" y="6" width="1.02" height="1.02" fill="#3277D6"/><rect x="2" y="6" width="1.02" height="1.02" fill="#3277D6"/><rect x="3" y="6" width="1.02" height="1.02" fill="#E0633A"/><rect x="4" y="6" width="1.02" height="1.02" fill="#E0633A"/><rect x="5" y="6" width="1.02" height="1.02" fill="#3277D6"/><rect x="6" y="6" width="1.02" height="1.02" fill="#3277D6"/><rect x="7" y="6" width="1.02" height="1.02" fill="#C84040"/><rect x="0" y="7" width="1.02" height="1.02" fill="#4F9A62"/><rect x="1" y="7" width="1.02" height="1.02" fill="#4F9A62"/><rect x="2" y="7" width="1.02" height="1.02" fill="#3277D6"/><rect x="3" y="7" width="1.02" height="1.02" fill="#4F9A62"/><rect x="4" y="7" width="1.02" height="1.02" fill="#4F9A62"/><rect x="5" y="7" width="1.02" height="1.02" fill="#3277D6"/><rect x="6" y="7" width="1.02" height="1.02" fill="#4F9A62"/><rect x="7" y="7" width="1.02" height="1.02" fill="#4F9A62"/></g></svg>
<div class="t" style="left:758.50px;top:626.30px;font-size:8.6px;line-height:8.6px;color:#6D68E6;font-weight:400;transform:scale(0.9892,1.0);transform-origin:0 7.28px;-webkit-text-stroke:0.18px currentColor;">0x3B4...eD6C6</div>
<div class="t" style="left:838.00px;top:626.05px;font-size:8.89px;line-height:8.89px;color:#454545;font-weight:400;-webkit-text-stroke:0.18px currentColor;">3,200.00...</div>
<div class="t" style="left:883.40px;top:626.47px;font-size:8.4px;line-height:8.4px;color:#454545;font-weight:400;transform:scale(0.9,1.0);transform-origin:0 7.11px;-webkit-text-stroke:0.18px currentColor;">GETH</div>
<div class="t" style="left:938.50px;top:626.47px;font-size:8.4px;line-height:8.4px;color:#454545;font-weight:400;transform:scale(1.0078,1.0);transform-origin:0 7.11px;-webkit-text-stroke:0.18px currentColor;">3 months ago</div>
<div class="abs" style="left:322.5px;top:649.41px;width:715px;height:1px;background:#F1F1F3"></div>
<div class="abs" style="left:0;top:0;width:1px;height:47px;background:#F2A478;opacity:0.8"></div><div class="abs" style="left:1199px;top:0;width:1px;height:47px;background:#F2A478;opacity:0.8"></div>
<svg style="left:0;top:627px;width:12px;height:12px" viewBox="0 627 12 12"><path d="M0,629.8 A9.2,9.2 0 0 0 9.2,639 H0 Z" fill="#55524E"/><path d="M0,629.8 A9.2,9.2 0 0 0 9.2,639" fill="none" stroke="#FFFFFF" stroke-width="0.8"/></svg>
<svg style="left:1188px;top:627px;width:12px;height:12px" viewBox="1188 627 12 12"><path d="M1200,629.8 A9.2,9.2 0 0 1 1190.8,639 H1200 Z" fill="#55524E"/><path d="M1200,629.8 A9.2,9.2 0 0 1 1190.8,639" fill="none" stroke="#FFFFFF" stroke-width="0.8"/></svg>
</body></html>
